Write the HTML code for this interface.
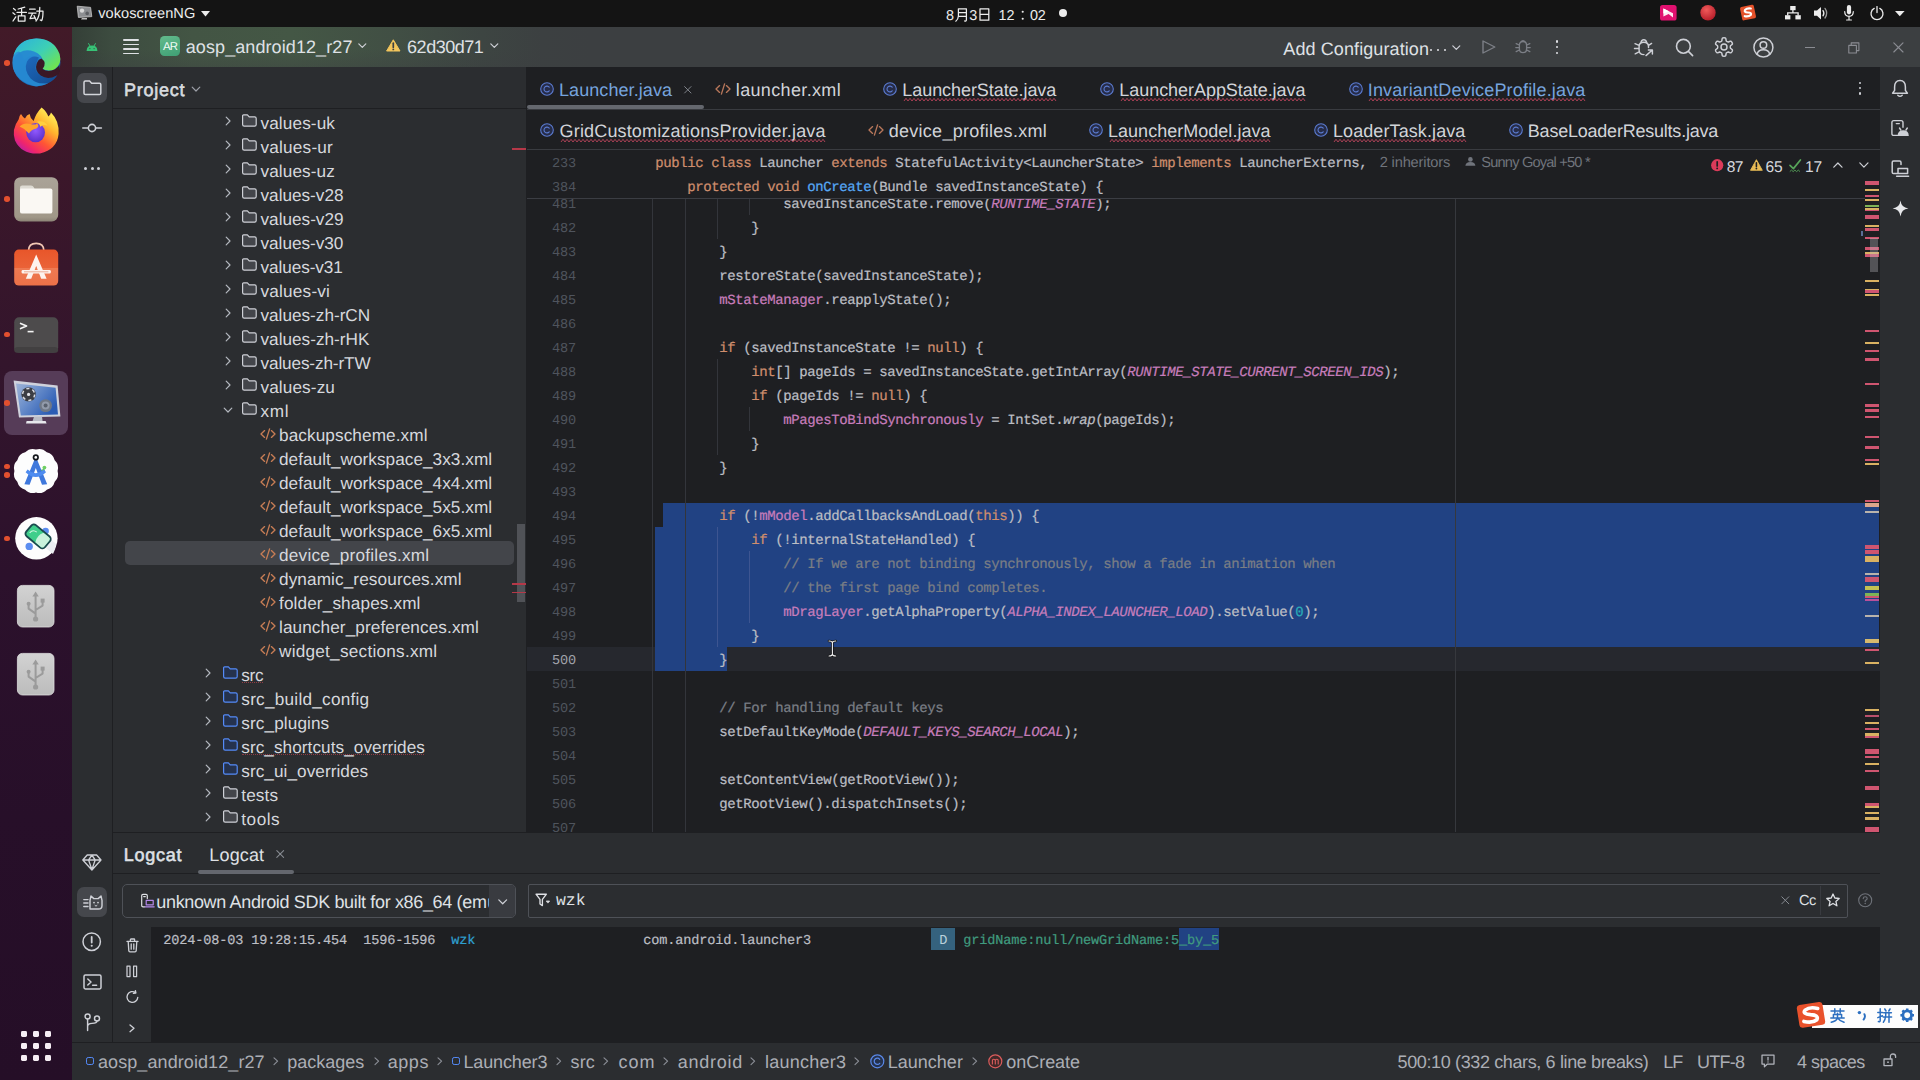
<!DOCTYPE html>
<html lang="en"><head><meta charset="utf-8"><title>Android Studio - Launcher.java</title>
<style>
html,body{margin:0;padding:0;background:#1e1f22;}
body{width:1920px;height:1080px;position:relative;overflow:hidden;font-family:'Liberation Sans',sans-serif;text-rendering:geometricPrecision;-webkit-font-smoothing:antialiased;}
body div,body span,body svg{position:absolute;display:block;box-sizing:border-box;}
span{white-space:pre;}
svg{overflow:visible;}
</style></head><body>
<div style="left:0px;top:0px;width:1920px;height:27px;background:#141414;"></div>
<div style="left:0px;top:27px;width:72px;height:1053px;background:linear-gradient(180deg,#421a28 0%,#3b172a 14%,#33152c 32%,#2c112c 52%,#270f29 75%,#250e27 100%);"></div>
<div style="left:72px;top:27px;width:1848px;height:40px;background:linear-gradient(180deg,rgba(60,63,65,0) 0%,rgba(60,63,65,0) 55%,rgba(60,63,65,.35) 100%),linear-gradient(90deg,#343f37 0px,#3d4c40 40px,#435544 120px,#445745 220px,#414f44 320px,#3d4542 410px,#3c4041 470px,#3c3f41 520px,#3c3f41 100%);"></div>
<div style="left:72px;top:67px;width:41px;height:975px;background:#2b2d30;"></div>
<div style="left:112px;top:67px;width:1px;height:975px;background:#1e1f22;"></div>
<div style="left:113px;top:67px;width:413px;height:766px;background:#2b2d30;"></div>
<div style="left:113px;top:108px;width:413px;height:1px;background:#1e1f22;"></div>
<div style="left:527px;top:67px;width:1353px;height:766px;background:#1e1f22;"></div>
<div style="left:1880px;top:67px;width:40px;height:975px;background:#2b2d30;"></div>
<div style="left:1879px;top:67px;width:1px;height:975px;background:#1e1f22;"></div>
<div style="left:113px;top:833px;width:1767px;height:209px;background:#2b2d30;"></div>
<div style="left:113px;top:832px;width:1767px;height:1px;background:#1e1f22;"></div>
<div style="left:72px;top:1042px;width:1848px;height:38px;background:#2b2d30;"></div>
<div style="left:72px;top:1042px;width:1848px;height:1px;background:#1e1f22;"></div>
<svg style="left:12px;top:6px;" width="32" height="17" viewBox="0 0 32 17"><g fill="none" stroke="#ececec" stroke-width="1.25" stroke-linecap="round" stroke-linejoin="round"><path d="M1.5 2.5 L3.6 4.2 M0.8 6.8 L3 8.4 M1 15 L3.8 10.8"/><path d="M12.8 1.2 L6.2 3 M5 6.4 H14.4 M9.6 2.4 V9.6 M6.3 9.8 H13 V15 H6.3 Z"/><path d="M17.6 3.2 H23.2 M16.6 7 H24 M20.6 7.2 L18 12.6 L23.4 11.8 M22 9.6 L23.8 13.6"/><path d="M24.8 5.2 H31 Q31 12.6 29.6 14.6 L28.2 14 M27.8 1.4 Q27.8 10.6 24 15"/></g></svg>
<svg style="left:76px;top:5px;" width="17" height="16" viewBox="0 0 17 16"><path d="M1.2 1.2 L14.6 2.4 L15.8 11.6 L2.4 12.4 Z" fill="#8d8f92" stroke="#c9c9c9" stroke-width="0.8"/><circle cx="6" cy="5.6" r="2.2" fill="#d8d8d8"/><circle cx="11.2" cy="8.4" r="1.8" fill="#5d5f63"/><path d="M6 13 H11 V14.6 H5 Z" fill="#bdbdbd"/></svg>
<span style="left:98.25px;top:5px;font:14.6px 'Liberation Sans',sans-serif;line-height:19px;color:#ececec;letter-spacing:0.046px;">vokoscreenNG</span>
<svg style="left:200.8px;top:10.8px;" width="9" height="6" viewBox="0 0 9 6"><path d="M0 0 H9 L4.5 5.6 Z" fill="#ececec"/></svg>
<span style="left:946.07px;top:7px;font:14.4px 'Liberation Sans',sans-serif;line-height:19px;color:#ececec;">8</span>
<svg style="left:954.6px;top:7.6px;" width="13" height="14" viewBox="0 0 13 14"><g fill="none" stroke="#ececec" stroke-width="1.25" stroke-linecap="round" stroke-linejoin="round"><path d="M3.4 0.8 H11.4 V12 Q11.4 13.2 9.6 13 M3.4 0.8 V8 Q3.2 11.6 0.8 13.2 M3.6 4.6 H11.2 M3.6 8.4 H11.2"/></g></svg>
<span style="left:969.15px;top:7px;font:14.4px 'Liberation Sans',sans-serif;line-height:19px;color:#ececec;">3</span>
<svg style="left:978.8px;top:8px;" width="11" height="13" viewBox="0 0 11 13"><g fill="none" stroke="#ececec" stroke-width="1.25" stroke-linejoin="round"><path d="M1 0.8 H9.8 V12.2 H1 Z M1 6.4 H9.8"/></g></svg>
<span style="left:998.60px;top:7px;font:14.4px 'Liberation Sans',sans-serif;line-height:19px;color:#ececec;letter-spacing:-0.195px;">12</span>
<svg style="left:1021px;top:9.6px;" width="4" height="11" viewBox="0 0 4 11"><circle cx="1.7" cy="1.7" r="1.05" fill="#ececec"/><circle cx="1.7" cy="8.7" r="1.05" fill="#ececec"/></svg>
<span style="left:1030.04px;top:7px;font:14.4px 'Liberation Sans',sans-serif;line-height:19px;color:#ececec;letter-spacing:-0.229px;">02</span>
<div style="left:1058.8px;top:8.9px;width:8.4px;height:8.4px;border-radius:50%;background:#ececec;"></div>
<svg style="left:1659.8px;top:4.9px;" width="17" height="16" viewBox="0 0 17 16"><rect x="0" y="0" width="16.6" height="15.5" rx="2.6" fill="#e0106f"/><path d="M3.4 3.6 L13 8.2 V12.4 L8.6 9 L3.4 11.6 Z" fill="#fde7f1"/><path d="M3.4 3.6 L9 6.2 L3.4 8.6Z" fill="#fff"/></svg>
<svg style="left:1700px;top:5px;" width="16" height="16" viewBox="0 0 16 16"><defs><radialGradient id="rg1" cx="40%" cy="32%" r="70%"><stop offset="0" stop-color="#f05a5a"/><stop offset="1" stop-color="#b81f2b"/></radialGradient></defs><circle cx="8" cy="7.7" r="7.7" fill="url(#rg1)"/></svg>
<svg style="left:1740px;top:5px;" width="17" height="16" viewBox="0 0 17 16"><g transform="rotate(-12 8 7.5)"><rect x="1" y="0.8" width="14" height="13.6" rx="1.6" fill="#e4512a"/><path d="M11.6 4.2 Q8 2.8 5.6 4.4 Q3.8 6.4 7.8 7.4 Q11.8 8.2 10.4 10.4 Q8 12 4 10.4" fill="none" stroke="#fff" stroke-width="2.1" stroke-linecap="round"/></g></svg>
<svg style="left:1784.5px;top:6px;" width="16" height="14" viewBox="0 0 16 14"><g fill="#ececec"><rect x="5.2" y="0" width="5.4" height="4.2"/><rect x="0" y="9.2" width="5.4" height="4.2"/><rect x="10.4" y="9.2" width="5.4" height="4.2"/></g><path d="M7.9 4 V6.8 M2.7 9.4 V6.8 H13.1 V9.4" fill="none" stroke="#ececec" stroke-width="1.3"/></svg>
<svg style="left:1813.8px;top:5.6px;" width="15" height="15" viewBox="0 0 15 15"><path d="M0 4.6 H3 L7 1 V13.4 L3 9.8 H0 Z" fill="#ececec"/><path d="M9 4.6 Q10.8 7.2 9 9.8" fill="none" stroke="#ececec" stroke-width="1.3" stroke-linecap="round"/><path d="M11 2.4 Q14.4 7.2 11 12" fill="none" stroke="#9a9a9a" stroke-width="1.3" stroke-linecap="round"/></svg>
<svg style="left:1843.6px;top:5.2px;" width="10" height="16" viewBox="0 0 10 16"><rect x="2.9" y="0" width="4.2" height="9.4" rx="2.1" fill="#ececec"/><path d="M0.7 6.6 Q0.7 11.4 5 11.4 Q9.3 11.4 9.3 6.6 M5 11.6 V14.8 M2.6 15 H7.4" fill="none" stroke="#ececec" stroke-width="1.2" stroke-linecap="round"/></svg>
<svg style="left:1869.6px;top:5.6px;" width="14" height="14" viewBox="0 0 14 14"><path d="M4.2 2.4 A6 6 0 1 0 9.8 2.4" fill="none" stroke="#ececec" stroke-width="1.3" stroke-linecap="round"/><path d="M7 0.6 V6.6" stroke="#ececec" stroke-width="1.3" stroke-linecap="round"/></svg>
<svg style="left:1895.4px;top:11.2px;" width="10" height="6" viewBox="0 0 10 6"><path d="M0 0 H9.6 L4.8 5.2 Z" fill="#ececec"/></svg>
<svg style="left:86px;top:42.6px;" width="12" height="9" viewBox="0 0 12 9"><path d="M0.6 8 Q0.8 2.6 6 2.6 Q11.2 2.6 11.4 8 Z" fill="#37c276"/><path d="M2.6 0.6 L4 3 M9.4 0.6 L8 3" stroke="#37c276" stroke-width="1" stroke-linecap="round"/><circle cx="3.9" cy="5.6" r="0.6" fill="#3a4a3c"/><circle cx="8.1" cy="5.6" r="0.6" fill="#3a4a3c"/></svg>
<div style="left:122.7px;top:39.3px;width:16.3px;height:1.5px;background:#dfe1e5;border-radius:1px;"></div>
<div style="left:122.7px;top:43.8px;width:16.3px;height:1.5px;background:#dfe1e5;border-radius:1px;"></div>
<div style="left:122.7px;top:48.3px;width:16.3px;height:1.5px;background:#dfe1e5;border-radius:1px;"></div>
<div style="left:122.7px;top:52.8px;width:16.3px;height:1.5px;background:#dfe1e5;border-radius:1px;"></div>
<div style="left:160px;top:35.6px;width:20px;height:20px;border-radius:4.5px;background:linear-gradient(160deg,#63bb8c,#3f9f74);"></div>
<span style="left:162.98px;top:40px;font:11.4px 'Liberation Sans',sans-serif;line-height:15px;color:#f0fbf4;letter-spacing:-0.877px;">AR</span>
<span style="left:185.74px;top:36px;font:18px 'Liberation Sans',sans-serif;line-height:23px;color:#dfe1e5;letter-spacing:0.090px;">aosp_android12_r27</span>
<svg style="left:358px;top:43px;" width="9" height="6" viewBox="0 0 9 6"><path d="M0.8 0.9 L4.3 4.4 L7.8 0.9" fill="none" stroke="#ced0d6" stroke-width="1.2" stroke-linecap="round" stroke-linejoin="round"/></svg>
<svg style="left:386.4px;top:39.4px;" width="15" height="13" viewBox="0 0 15 13"><path d="M7.3 0.8 L14 12 H0.6 Z" fill="#f2c55c" stroke="#f2c55c" stroke-width="1" stroke-linejoin="round"/><path d="M7.3 4.2 V8.2" stroke="#3c3f41" stroke-width="1.7" stroke-linecap="round"/><circle cx="7.3" cy="10.4" r="0.95" fill="#3c3f41"/></svg>
<span style="left:407.09px;top:36px;font:18px 'Liberation Sans',sans-serif;line-height:23px;color:#dfe1e5;letter-spacing:-0.472px;">62d30d71</span>
<svg style="left:489.8px;top:43px;" width="9" height="6" viewBox="0 0 9 6"><path d="M0.8 0.9 L4.3 4.4 L7.8 0.9" fill="none" stroke="#ced0d6" stroke-width="1.2" stroke-linecap="round" stroke-linejoin="round"/></svg>
<span style="left:1283.36px;top:38px;font:18px 'Liberation Sans',sans-serif;line-height:23px;color:#dfe1e5;letter-spacing:0.093px;">Add Configuration</span>
<div style="left:1430.4px;top:48.6px;width:2px;height:2px;border-radius:50%;background:#dfe1e5;"></div>
<div style="left:1437.2px;top:48.6px;width:2px;height:2px;border-radius:50%;background:#dfe1e5;"></div>
<div style="left:1444px;top:48.6px;width:2px;height:2px;border-radius:50%;background:#dfe1e5;"></div>
<svg style="left:1452.4px;top:45.4px;" width="9" height="6" viewBox="0 0 9 6"><path d="M0.8 0.9 L4.3 4.4 L7.8 0.9" fill="none" stroke="#ced0d6" stroke-width="1.2" stroke-linecap="round" stroke-linejoin="round"/></svg>
<svg style="left:1482.4px;top:40.4px;" width="14" height="14" viewBox="0 0 14 14"><path d="M1 1 L12.8 7 L1 13 Z" fill="none" stroke="#7c7f86" stroke-width="1.4" stroke-linecap="round" stroke-linejoin="round"/></svg>
<svg style="left:1515px;top:39.4px;" width="16" height="15" viewBox="0 0 16 15"><path d="M4.4 6.2 Q4.4 2.6 8 2.6 Q11.6 2.6 11.6 6.2 V10 Q11.6 13.6 8 13.6 Q4.4 13.6 4.4 10 Z M5.6 3.2 Q8 0 10.4 3.2 M4.2 6 L1.2 4.6 M4.2 8.6 H0.8 M4.2 11 L1.2 12.6 M11.8 6 L14.8 4.6 M11.8 8.6 H15.2 M11.8 11 L14.8 12.6" fill="none" stroke="#7c7f86" stroke-width="1.3" stroke-linecap="round" stroke-linejoin="round"/></svg>
<div style="left:1555.8px;top:40.0px;width:2.6px;height:2.6px;border-radius:50%;background:#dfe1e5;"></div>
<div style="left:1555.8px;top:45.900000000000006px;width:2.6px;height:2.6px;border-radius:50%;background:#dfe1e5;"></div>
<div style="left:1555.8px;top:51.7px;width:2.6px;height:2.6px;border-radius:50%;background:#dfe1e5;"></div>
<svg style="left:1634.4px;top:38.6px;" width="20" height="18" viewBox="0 0 20 18"><path d="M14.5 8.6 V7.6 Q14.5 3.3 9.8 3.3 Q5.1 3.3 5.1 7.6 V11.2 Q5.1 15.6 10 15.6 M6.9 3.6 Q7.4 0.7 9.8 0.7 Q12.2 0.7 12.7 3.6 M5 6.3 L1 4.7 M5 9.5 H0.5 M5 12.8 L1.2 14.8 M14.6 6.3 L17.6 4.4 M12 16.6 L18.3 11 M14.4 10.9 H18.4 V14.9" fill="none" stroke="#ced0d6" stroke-width="1.45" stroke-linecap="round" stroke-linejoin="round"/></svg>
<svg style="left:1675px;top:38px;" width="19" height="19" viewBox="0 0 19 19"><path d="M8.4 1.4 A6.9 6.9 0 1 0 8.4 15.2 A6.9 6.9 0 1 0 8.4 1.4 M13.4 13.4 L17.6 17.6" fill="none" stroke="#ced0d6" stroke-width="1.6" stroke-linecap="round" stroke-linejoin="round"/></svg>
<svg style="left:1713.6px;top:37.2px;" width="20" height="20" viewBox="0 0 20 20"><path d="M10.00 0.82 L10.60 0.84 L11.19 0.95 L11.73 1.32 L12.01 2.51 L12.14 3.70 L12.44 4.11 L12.80 4.33 L13.16 4.53 L13.51 4.74 L13.88 4.95 L14.38 5.00 L15.48 4.52 L16.65 4.16 L17.24 4.44 L17.63 4.90 L17.95 5.41 L18.23 5.94 L18.43 6.51 L18.38 7.15 L17.49 7.99 L16.52 8.70 L16.32 9.17 L16.31 9.59 L16.32 10.00 L16.31 10.41 L16.32 10.83 L16.52 11.30 L17.49 12.01 L18.38 12.85 L18.43 13.49 L18.23 14.06 L17.95 14.59 L17.63 15.10 L17.24 15.56 L16.65 15.84 L15.48 15.48 L14.38 15.00 L13.88 15.05 L13.51 15.26 L13.16 15.47 L12.80 15.67 L12.44 15.89 L12.14 16.30 L12.01 17.49 L11.73 18.68 L11.19 19.05 L10.60 19.16 L10.00 19.18 L9.40 19.16 L8.81 19.05 L8.27 18.68 L7.99 17.49 L7.86 16.30 L7.56 15.89 L7.20 15.67 L6.84 15.47 L6.49 15.26 L6.12 15.05 L5.62 15.00 L4.52 15.48 L3.35 15.84 L2.76 15.56 L2.37 15.10 L2.05 14.59 L1.77 14.06 L1.57 13.49 L1.62 12.85 L2.51 12.01 L3.48 11.30 L3.68 10.83 L3.69 10.41 L3.68 10.00 L3.69 9.59 L3.68 9.17 L3.48 8.70 L2.51 7.99 L1.62 7.15 L1.57 6.51 L1.77 5.94 L2.05 5.41 L2.37 4.90 L2.76 4.44 L3.35 4.16 L4.52 4.52 L5.62 5.00 L6.12 4.95 L6.49 4.74 L6.84 4.53 L7.20 4.33 L7.56 4.11 L7.86 3.70 L7.99 2.51 L8.27 1.32 L8.81 0.95 L9.40 0.84 Z" fill="none" stroke="#ced0d6" stroke-width="1.45" stroke-linecap="round" stroke-linejoin="round"/><circle cx="10" cy="10" r="3" fill="none" stroke="#ced0d6" stroke-width="1.45"/></svg>
<svg style="left:1753.4px;top:36.8px;" width="21" height="21" viewBox="0 0 21 21"><circle cx="10.4" cy="10.4" r="9.5" fill="none" stroke="#ced0d6" stroke-width="1.5"/><circle cx="10.4" cy="8" r="3.3" fill="none" stroke="#ced0d6" stroke-width="1.5"/><path d="M4.2 17 Q5 12.8 10.4 12.8 Q15.8 12.8 16.6 17" fill="none" stroke="#ced0d6" stroke-width="1.5" stroke-linecap="round" stroke-linejoin="round"/></svg>
<div style="left:1805px;top:46.7px;width:10.4px;height:1.2px;background:#8a8c92;"></div>
<svg style="left:1848.4px;top:41.6px;" width="12" height="12" viewBox="0 0 12 12"><path d="M0.8 3.4 H8.4 V11 H0.8 Z M3.2 3.2 V0.9 H10.9 V8.6 H8.6" fill="none" stroke="#8a8c92" stroke-width="1.1" stroke-linecap="round" stroke-linejoin="round"/></svg>
<svg style="left:1893px;top:42px;" width="11" height="11" viewBox="0 0 11 11"><path d="M0.8 0.8 L10 10 M10 0.8 L0.8 10" fill="none" stroke="#8a8c92" stroke-width="1.15" stroke-linecap="round" stroke-linejoin="round"/></svg>
<span style="left:124.02px;top:79px;font:18px 'Liberation Sans',sans-serif;line-height:23px;color:#d6d8dd;letter-spacing:0.763px;-webkit-text-stroke:0.55px #dfe1e5;">Project</span>
<svg style="left:190.2px;top:85.3px;" width="12" height="8" viewBox="0 0 12 8"><path d="M2.2 2.2 L6 6 L9.8 2.2" fill="none" stroke="#9da0a8" stroke-width="1.2" stroke-linecap="round" stroke-linejoin="round"/></svg>
<div style="left:125px;top:541px;width:389px;height:24px;background:#43454a;border-radius:5px;"></div>
<svg style="left:223.6px;top:115px;" width="8" height="12" viewBox="0 0 8 12"><path d="M2.2 2.2 L6 6 L2.2 9.8" fill="none" stroke="#b4b8bf" stroke-width="1.2" stroke-linecap="round" stroke-linejoin="round"/></svg>
<svg style="left:242px;top:113.9px;" width="15" height="13" viewBox="0 0 15 13"><path d="M1.6 0.8 H5.4 L7.2 2.8 H12.6 Q14.2 2.8 14.2 4.4 V10.6 Q14.2 12.2 12.6 12.2 H2.2 Q0.6 12.2 0.6 10.6 V1.8 Q0.6 0.8 1.6 0.8 Z" fill="#43454a" stroke="#ced0d6" stroke-width="1.2" stroke-linejoin="round"/></svg>
<span style="left:260.50px;top:112px;font:17.2px 'Liberation Sans',sans-serif;line-height:22px;color:#d6d8dd;letter-spacing:0.109px;">values-uk</span>
<svg style="left:223.6px;top:139px;" width="8" height="12" viewBox="0 0 8 12"><path d="M2.2 2.2 L6 6 L2.2 9.8" fill="none" stroke="#b4b8bf" stroke-width="1.2" stroke-linecap="round" stroke-linejoin="round"/></svg>
<svg style="left:242px;top:137.9px;" width="15" height="13" viewBox="0 0 15 13"><path d="M1.6 0.8 H5.4 L7.2 2.8 H12.6 Q14.2 2.8 14.2 4.4 V10.6 Q14.2 12.2 12.6 12.2 H2.2 Q0.6 12.2 0.6 10.6 V1.8 Q0.6 0.8 1.6 0.8 Z" fill="#43454a" stroke="#ced0d6" stroke-width="1.2" stroke-linejoin="round"/></svg>
<span style="left:260.50px;top:136px;font:17.2px 'Liberation Sans',sans-serif;line-height:22px;color:#d6d8dd;letter-spacing:0.205px;">values-ur</span>
<svg style="left:223.6px;top:163px;" width="8" height="12" viewBox="0 0 8 12"><path d="M2.2 2.2 L6 6 L2.2 9.8" fill="none" stroke="#b4b8bf" stroke-width="1.2" stroke-linecap="round" stroke-linejoin="round"/></svg>
<svg style="left:242px;top:161.9px;" width="15" height="13" viewBox="0 0 15 13"><path d="M1.6 0.8 H5.4 L7.2 2.8 H12.6 Q14.2 2.8 14.2 4.4 V10.6 Q14.2 12.2 12.6 12.2 H2.2 Q0.6 12.2 0.6 10.6 V1.8 Q0.6 0.8 1.6 0.8 Z" fill="#43454a" stroke="#ced0d6" stroke-width="1.2" stroke-linejoin="round"/></svg>
<span style="left:260.50px;top:160px;font:17.2px 'Liberation Sans',sans-serif;line-height:22px;color:#d6d8dd;letter-spacing:0.094px;">values-uz</span>
<svg style="left:223.6px;top:187px;" width="8" height="12" viewBox="0 0 8 12"><path d="M2.2 2.2 L6 6 L2.2 9.8" fill="none" stroke="#b4b8bf" stroke-width="1.2" stroke-linecap="round" stroke-linejoin="round"/></svg>
<svg style="left:242px;top:185.9px;" width="15" height="13" viewBox="0 0 15 13"><path d="M1.6 0.8 H5.4 L7.2 2.8 H12.6 Q14.2 2.8 14.2 4.4 V10.6 Q14.2 12.2 12.6 12.2 H2.2 Q0.6 12.2 0.6 10.6 V1.8 Q0.6 0.8 1.6 0.8 Z" fill="#43454a" stroke="#ced0d6" stroke-width="1.2" stroke-linejoin="round"/></svg>
<span style="left:260.50px;top:184px;font:17.2px 'Liberation Sans',sans-serif;line-height:22px;color:#d6d8dd;letter-spacing:-0.013px;">values-v28</span>
<svg style="left:223.6px;top:211px;" width="8" height="12" viewBox="0 0 8 12"><path d="M2.2 2.2 L6 6 L2.2 9.8" fill="none" stroke="#b4b8bf" stroke-width="1.2" stroke-linecap="round" stroke-linejoin="round"/></svg>
<svg style="left:242px;top:209.9px;" width="15" height="13" viewBox="0 0 15 13"><path d="M1.6 0.8 H5.4 L7.2 2.8 H12.6 Q14.2 2.8 14.2 4.4 V10.6 Q14.2 12.2 12.6 12.2 H2.2 Q0.6 12.2 0.6 10.6 V1.8 Q0.6 0.8 1.6 0.8 Z" fill="#43454a" stroke="#ced0d6" stroke-width="1.2" stroke-linejoin="round"/></svg>
<span style="left:260.50px;top:208px;font:17.2px 'Liberation Sans',sans-serif;line-height:22px;color:#d6d8dd;letter-spacing:-0.006px;">values-v29</span>
<svg style="left:223.6px;top:235px;" width="8" height="12" viewBox="0 0 8 12"><path d="M2.2 2.2 L6 6 L2.2 9.8" fill="none" stroke="#b4b8bf" stroke-width="1.2" stroke-linecap="round" stroke-linejoin="round"/></svg>
<svg style="left:242px;top:233.9px;" width="15" height="13" viewBox="0 0 15 13"><path d="M1.6 0.8 H5.4 L7.2 2.8 H12.6 Q14.2 2.8 14.2 4.4 V10.6 Q14.2 12.2 12.6 12.2 H2.2 Q0.6 12.2 0.6 10.6 V1.8 Q0.6 0.8 1.6 0.8 Z" fill="#43454a" stroke="#ced0d6" stroke-width="1.2" stroke-linejoin="round"/></svg>
<span style="left:260.50px;top:232px;font:17.2px 'Liberation Sans',sans-serif;line-height:22px;color:#d6d8dd;letter-spacing:-0.022px;">values-v30</span>
<svg style="left:223.6px;top:259px;" width="8" height="12" viewBox="0 0 8 12"><path d="M2.2 2.2 L6 6 L2.2 9.8" fill="none" stroke="#b4b8bf" stroke-width="1.2" stroke-linecap="round" stroke-linejoin="round"/></svg>
<svg style="left:242px;top:257.9px;" width="15" height="13" viewBox="0 0 15 13"><path d="M1.6 0.8 H5.4 L7.2 2.8 H12.6 Q14.2 2.8 14.2 4.4 V10.6 Q14.2 12.2 12.6 12.2 H2.2 Q0.6 12.2 0.6 10.6 V1.8 Q0.6 0.8 1.6 0.8 Z" fill="#43454a" stroke="#ced0d6" stroke-width="1.2" stroke-linejoin="round"/></svg>
<span style="left:260.50px;top:256px;font:17.2px 'Liberation Sans',sans-serif;line-height:22px;color:#d6d8dd;letter-spacing:-0.081px;">values-v31</span>
<svg style="left:223.6px;top:283px;" width="8" height="12" viewBox="0 0 8 12"><path d="M2.2 2.2 L6 6 L2.2 9.8" fill="none" stroke="#b4b8bf" stroke-width="1.2" stroke-linecap="round" stroke-linejoin="round"/></svg>
<svg style="left:242px;top:281.9px;" width="15" height="13" viewBox="0 0 15 13"><path d="M1.6 0.8 H5.4 L7.2 2.8 H12.6 Q14.2 2.8 14.2 4.4 V10.6 Q14.2 12.2 12.6 12.2 H2.2 Q0.6 12.2 0.6 10.6 V1.8 Q0.6 0.8 1.6 0.8 Z" fill="#43454a" stroke="#ced0d6" stroke-width="1.2" stroke-linejoin="round"/></svg>
<span style="left:260.50px;top:280px;font:17.2px 'Liberation Sans',sans-serif;line-height:22px;color:#d6d8dd;letter-spacing:0.199px;">values-vi</span>
<svg style="left:223.6px;top:307px;" width="8" height="12" viewBox="0 0 8 12"><path d="M2.2 2.2 L6 6 L2.2 9.8" fill="none" stroke="#b4b8bf" stroke-width="1.2" stroke-linecap="round" stroke-linejoin="round"/></svg>
<svg style="left:242px;top:305.9px;" width="15" height="13" viewBox="0 0 15 13"><path d="M1.6 0.8 H5.4 L7.2 2.8 H12.6 Q14.2 2.8 14.2 4.4 V10.6 Q14.2 12.2 12.6 12.2 H2.2 Q0.6 12.2 0.6 10.6 V1.8 Q0.6 0.8 1.6 0.8 Z" fill="#43454a" stroke="#ced0d6" stroke-width="1.2" stroke-linejoin="round"/></svg>
<span style="left:260.50px;top:304px;font:17.2px 'Liberation Sans',sans-serif;line-height:22px;color:#d6d8dd;letter-spacing:-0.015px;">values-zh-rCN</span>
<svg style="left:223.6px;top:331px;" width="8" height="12" viewBox="0 0 8 12"><path d="M2.2 2.2 L6 6 L2.2 9.8" fill="none" stroke="#b4b8bf" stroke-width="1.2" stroke-linecap="round" stroke-linejoin="round"/></svg>
<svg style="left:242px;top:329.9px;" width="15" height="13" viewBox="0 0 15 13"><path d="M1.6 0.8 H5.4 L7.2 2.8 H12.6 Q14.2 2.8 14.2 4.4 V10.6 Q14.2 12.2 12.6 12.2 H2.2 Q0.6 12.2 0.6 10.6 V1.8 Q0.6 0.8 1.6 0.8 Z" fill="#43454a" stroke="#ced0d6" stroke-width="1.2" stroke-linejoin="round"/></svg>
<span style="left:260.50px;top:328px;font:17.2px 'Liberation Sans',sans-serif;line-height:22px;color:#d6d8dd;">values-zh-rHK</span>
<svg style="left:223.6px;top:355px;" width="8" height="12" viewBox="0 0 8 12"><path d="M2.2 2.2 L6 6 L2.2 9.8" fill="none" stroke="#b4b8bf" stroke-width="1.2" stroke-linecap="round" stroke-linejoin="round"/></svg>
<svg style="left:242px;top:353.9px;" width="15" height="13" viewBox="0 0 15 13"><path d="M1.6 0.8 H5.4 L7.2 2.8 H12.6 Q14.2 2.8 14.2 4.4 V10.6 Q14.2 12.2 12.6 12.2 H2.2 Q0.6 12.2 0.6 10.6 V1.8 Q0.6 0.8 1.6 0.8 Z" fill="#43454a" stroke="#ced0d6" stroke-width="1.2" stroke-linejoin="round"/></svg>
<span style="left:260.50px;top:352px;font:17.2px 'Liberation Sans',sans-serif;line-height:22px;color:#d6d8dd;letter-spacing:-0.135px;">values-zh-rTW</span>
<svg style="left:223.6px;top:379px;" width="8" height="12" viewBox="0 0 8 12"><path d="M2.2 2.2 L6 6 L2.2 9.8" fill="none" stroke="#b4b8bf" stroke-width="1.2" stroke-linecap="round" stroke-linejoin="round"/></svg>
<svg style="left:242px;top:377.9px;" width="15" height="13" viewBox="0 0 15 13"><path d="M1.6 0.8 H5.4 L7.2 2.8 H12.6 Q14.2 2.8 14.2 4.4 V10.6 Q14.2 12.2 12.6 12.2 H2.2 Q0.6 12.2 0.6 10.6 V1.8 Q0.6 0.8 1.6 0.8 Z" fill="#43454a" stroke="#ced0d6" stroke-width="1.2" stroke-linejoin="round"/></svg>
<span style="left:260.50px;top:376px;font:17.2px 'Liberation Sans',sans-serif;line-height:22px;color:#d6d8dd;letter-spacing:0.105px;">values-zu</span>
<svg style="left:222px;top:405.5px;" width="12" height="8" viewBox="0 0 12 8"><path d="M2.2 2.2 L6 6 L9.8 2.2" fill="none" stroke="#b4b8bf" stroke-width="1.2" stroke-linecap="round" stroke-linejoin="round"/></svg>
<svg style="left:242px;top:401.9px;" width="15" height="13" viewBox="0 0 15 13"><path d="M1.6 0.8 H5.4 L7.2 2.8 H12.6 Q14.2 2.8 14.2 4.4 V10.6 Q14.2 12.2 12.6 12.2 H2.2 Q0.6 12.2 0.6 10.6 V1.8 Q0.6 0.8 1.6 0.8 Z" fill="#43454a" stroke="#ced0d6" stroke-width="1.2" stroke-linejoin="round"/></svg>
<span style="left:260.50px;top:400px;font:17.2px 'Liberation Sans',sans-serif;line-height:22px;color:#d6d8dd;letter-spacing:0.655px;">xml</span>
<svg style="left:260px;top:427.7px;" width="16" height="12" viewBox="0 0 16 12"><g fill="none" stroke="#c77d55" stroke-width="1.35" stroke-linecap="round" stroke-linejoin="round"><path d="M4.6 2.6 L1 6 L4.6 9.4"/><path d="M11.4 2.6 L15 6 L11.4 9.4"/><path d="M9.6 0.9 L6.4 11.1"/></g></svg>
<span style="left:279.00px;top:424px;font:17.2px 'Liberation Sans',sans-serif;line-height:22px;color:#d6d8dd;letter-spacing:0.090px;">backupscheme.xml</span>
<svg style="left:260px;top:451.7px;" width="16" height="12" viewBox="0 0 16 12"><g fill="none" stroke="#c77d55" stroke-width="1.35" stroke-linecap="round" stroke-linejoin="round"><path d="M4.6 2.6 L1 6 L4.6 9.4"/><path d="M11.4 2.6 L15 6 L11.4 9.4"/><path d="M9.6 0.9 L6.4 11.1"/></g></svg>
<span style="left:279.00px;top:448px;font:17.2px 'Liberation Sans',sans-serif;line-height:22px;color:#d6d8dd;letter-spacing:0.041px;">default_workspace_3x3.xml</span>
<svg style="left:260px;top:475.7px;" width="16" height="12" viewBox="0 0 16 12"><g fill="none" stroke="#c77d55" stroke-width="1.35" stroke-linecap="round" stroke-linejoin="round"><path d="M4.6 2.6 L1 6 L4.6 9.4"/><path d="M11.4 2.6 L15 6 L11.4 9.4"/><path d="M9.6 0.9 L6.4 11.1"/></g></svg>
<span style="left:279.00px;top:472px;font:17.2px 'Liberation Sans',sans-serif;line-height:22px;color:#d6d8dd;letter-spacing:0.041px;">default_workspace_4x4.xml</span>
<svg style="left:260px;top:499.7px;" width="16" height="12" viewBox="0 0 16 12"><g fill="none" stroke="#c77d55" stroke-width="1.35" stroke-linecap="round" stroke-linejoin="round"><path d="M4.6 2.6 L1 6 L4.6 9.4"/><path d="M11.4 2.6 L15 6 L11.4 9.4"/><path d="M9.6 0.9 L6.4 11.1"/></g></svg>
<span style="left:279.00px;top:496px;font:17.2px 'Liberation Sans',sans-serif;line-height:22px;color:#d6d8dd;letter-spacing:0.041px;">default_workspace_5x5.xml</span>
<svg style="left:260px;top:523.7px;" width="16" height="12" viewBox="0 0 16 12"><g fill="none" stroke="#c77d55" stroke-width="1.35" stroke-linecap="round" stroke-linejoin="round"><path d="M4.6 2.6 L1 6 L4.6 9.4"/><path d="M11.4 2.6 L15 6 L11.4 9.4"/><path d="M9.6 0.9 L6.4 11.1"/></g></svg>
<span style="left:279.00px;top:520px;font:17.2px 'Liberation Sans',sans-serif;line-height:22px;color:#d6d8dd;letter-spacing:0.041px;">default_workspace_6x5.xml</span>
<svg style="left:260px;top:547.7px;" width="16" height="12" viewBox="0 0 16 12"><g fill="none" stroke="#c77d55" stroke-width="1.35" stroke-linecap="round" stroke-linejoin="round"><path d="M4.6 2.6 L1 6 L4.6 9.4"/><path d="M11.4 2.6 L15 6 L11.4 9.4"/><path d="M9.6 0.9 L6.4 11.1"/></g></svg>
<span style="left:279.00px;top:544px;font:17.2px 'Liberation Sans',sans-serif;line-height:22px;color:#d6d8dd;letter-spacing:0.223px;">device_profiles.xml</span>
<svg style="left:260px;top:571.7px;" width="16" height="12" viewBox="0 0 16 12"><g fill="none" stroke="#c77d55" stroke-width="1.35" stroke-linecap="round" stroke-linejoin="round"><path d="M4.6 2.6 L1 6 L4.6 9.4"/><path d="M11.4 2.6 L15 6 L11.4 9.4"/><path d="M9.6 0.9 L6.4 11.1"/></g></svg>
<span style="left:279.00px;top:568px;font:17.2px 'Liberation Sans',sans-serif;line-height:22px;color:#d6d8dd;letter-spacing:0.102px;">dynamic_resources.xml</span>
<svg style="left:260px;top:595.7px;" width="16" height="12" viewBox="0 0 16 12"><g fill="none" stroke="#c77d55" stroke-width="1.35" stroke-linecap="round" stroke-linejoin="round"><path d="M4.6 2.6 L1 6 L4.6 9.4"/><path d="M11.4 2.6 L15 6 L11.4 9.4"/><path d="M9.6 0.9 L6.4 11.1"/></g></svg>
<span style="left:279.00px;top:592px;font:17.2px 'Liberation Sans',sans-serif;line-height:22px;color:#d6d8dd;letter-spacing:0.119px;">folder_shapes.xml</span>
<svg style="left:260px;top:619.7px;" width="16" height="12" viewBox="0 0 16 12"><g fill="none" stroke="#c77d55" stroke-width="1.35" stroke-linecap="round" stroke-linejoin="round"><path d="M4.6 2.6 L1 6 L4.6 9.4"/><path d="M11.4 2.6 L15 6 L11.4 9.4"/><path d="M9.6 0.9 L6.4 11.1"/></g></svg>
<span style="left:279.00px;top:616px;font:17.2px 'Liberation Sans',sans-serif;line-height:22px;color:#d6d8dd;letter-spacing:0.089px;">launcher_preferences.xml</span>
<svg style="left:260px;top:643.7px;" width="16" height="12" viewBox="0 0 16 12"><g fill="none" stroke="#c77d55" stroke-width="1.35" stroke-linecap="round" stroke-linejoin="round"><path d="M4.6 2.6 L1 6 L4.6 9.4"/><path d="M11.4 2.6 L15 6 L11.4 9.4"/><path d="M9.6 0.9 L6.4 11.1"/></g></svg>
<span style="left:279.00px;top:640px;font:17.2px 'Liberation Sans',sans-serif;line-height:22px;color:#d6d8dd;letter-spacing:0.240px;">widget_sections.xml</span>
<svg style="left:204.3px;top:667px;" width="8" height="12" viewBox="0 0 8 12"><path d="M2.2 2.2 L6 6 L2.2 9.8" fill="none" stroke="#b4b8bf" stroke-width="1.2" stroke-linecap="round" stroke-linejoin="round"/></svg>
<svg style="left:223px;top:666.1px;" width="15" height="13" viewBox="0 0 15 13"><path d="M1.6 0.8 H5.4 L7.2 2.8 H12.6 Q14.2 2.8 14.2 4.4 V10.6 Q14.2 12.2 12.6 12.2 H2.2 Q0.6 12.2 0.6 10.6 V1.8 Q0.6 0.8 1.6 0.8 Z" fill="#25324d" stroke="#548af7" stroke-width="1.2" stroke-linejoin="round"/></svg>
<span style="left:241.30px;top:664px;font:17.2px 'Liberation Sans',sans-serif;line-height:22px;color:#d6d8dd;letter-spacing:-0.345px;">src</span>
<svg style="left:204.3px;top:691px;" width="8" height="12" viewBox="0 0 8 12"><path d="M2.2 2.2 L6 6 L2.2 9.8" fill="none" stroke="#b4b8bf" stroke-width="1.2" stroke-linecap="round" stroke-linejoin="round"/></svg>
<svg style="left:223px;top:690.1px;" width="15" height="13" viewBox="0 0 15 13"><path d="M1.6 0.8 H5.4 L7.2 2.8 H12.6 Q14.2 2.8 14.2 4.4 V10.6 Q14.2 12.2 12.6 12.2 H2.2 Q0.6 12.2 0.6 10.6 V1.8 Q0.6 0.8 1.6 0.8 Z" fill="#25324d" stroke="#548af7" stroke-width="1.2" stroke-linejoin="round"/></svg>
<span style="left:241.30px;top:688px;font:17.2px 'Liberation Sans',sans-serif;line-height:22px;color:#d6d8dd;letter-spacing:0.245px;">src_build_config</span>
<svg style="left:204.3px;top:715px;" width="8" height="12" viewBox="0 0 8 12"><path d="M2.2 2.2 L6 6 L2.2 9.8" fill="none" stroke="#b4b8bf" stroke-width="1.2" stroke-linecap="round" stroke-linejoin="round"/></svg>
<svg style="left:223px;top:714.1px;" width="15" height="13" viewBox="0 0 15 13"><path d="M1.6 0.8 H5.4 L7.2 2.8 H12.6 Q14.2 2.8 14.2 4.4 V10.6 Q14.2 12.2 12.6 12.2 H2.2 Q0.6 12.2 0.6 10.6 V1.8 Q0.6 0.8 1.6 0.8 Z" fill="#25324d" stroke="#548af7" stroke-width="1.2" stroke-linejoin="round"/></svg>
<span style="left:241.30px;top:712px;font:17.2px 'Liberation Sans',sans-serif;line-height:22px;color:#d6d8dd;letter-spacing:0.096px;">src_plugins</span>
<svg style="left:204.3px;top:739px;" width="8" height="12" viewBox="0 0 8 12"><path d="M2.2 2.2 L6 6 L2.2 9.8" fill="none" stroke="#b4b8bf" stroke-width="1.2" stroke-linecap="round" stroke-linejoin="round"/></svg>
<svg style="left:223px;top:738.1px;" width="15" height="13" viewBox="0 0 15 13"><path d="M1.6 0.8 H5.4 L7.2 2.8 H12.6 Q14.2 2.8 14.2 4.4 V10.6 Q14.2 12.2 12.6 12.2 H2.2 Q0.6 12.2 0.6 10.6 V1.8 Q0.6 0.8 1.6 0.8 Z" fill="#25324d" stroke="#548af7" stroke-width="1.2" stroke-linejoin="round"/></svg>
<span style="left:241.30px;top:736px;font:17.2px 'Liberation Sans',sans-serif;line-height:22px;color:#d6d8dd;letter-spacing:0.052px;">src_shortcuts_overrides</span>
<svg style="left:204.3px;top:763px;" width="8" height="12" viewBox="0 0 8 12"><path d="M2.2 2.2 L6 6 L2.2 9.8" fill="none" stroke="#b4b8bf" stroke-width="1.2" stroke-linecap="round" stroke-linejoin="round"/></svg>
<svg style="left:223px;top:762.1px;" width="15" height="13" viewBox="0 0 15 13"><path d="M1.6 0.8 H5.4 L7.2 2.8 H12.6 Q14.2 2.8 14.2 4.4 V10.6 Q14.2 12.2 12.6 12.2 H2.2 Q0.6 12.2 0.6 10.6 V1.8 Q0.6 0.8 1.6 0.8 Z" fill="#25324d" stroke="#548af7" stroke-width="1.2" stroke-linejoin="round"/></svg>
<span style="left:241.30px;top:760px;font:17.2px 'Liberation Sans',sans-serif;line-height:22px;color:#d6d8dd;letter-spacing:0.053px;">src_ui_overrides</span>
<svg style="left:204.3px;top:787px;" width="8" height="12" viewBox="0 0 8 12"><path d="M2.2 2.2 L6 6 L2.2 9.8" fill="none" stroke="#b4b8bf" stroke-width="1.2" stroke-linecap="round" stroke-linejoin="round"/></svg>
<svg style="left:223px;top:786.1px;" width="15" height="13" viewBox="0 0 15 13"><path d="M1.6 0.8 H5.4 L7.2 2.8 H12.6 Q14.2 2.8 14.2 4.4 V10.6 Q14.2 12.2 12.6 12.2 H2.2 Q0.6 12.2 0.6 10.6 V1.8 Q0.6 0.8 1.6 0.8 Z" fill="#43454a" stroke="#ced0d6" stroke-width="1.2" stroke-linejoin="round"/></svg>
<span style="left:241.30px;top:784px;font:17.2px 'Liberation Sans',sans-serif;line-height:22px;color:#d6d8dd;letter-spacing:0.096px;">tests</span>
<svg style="left:204.3px;top:811px;" width="8" height="12" viewBox="0 0 8 12"><path d="M2.2 2.2 L6 6 L2.2 9.8" fill="none" stroke="#b4b8bf" stroke-width="1.2" stroke-linecap="round" stroke-linejoin="round"/></svg>
<svg style="left:223px;top:810.1px;" width="15" height="13" viewBox="0 0 15 13"><path d="M1.6 0.8 H5.4 L7.2 2.8 H12.6 Q14.2 2.8 14.2 4.4 V10.6 Q14.2 12.2 12.6 12.2 H2.2 Q0.6 12.2 0.6 10.6 V1.8 Q0.6 0.8 1.6 0.8 Z" fill="#43454a" stroke="#ced0d6" stroke-width="1.2" stroke-linejoin="round"/></svg>
<span style="left:241.30px;top:808px;font:17.2px 'Liberation Sans',sans-serif;line-height:22px;color:#d6d8dd;letter-spacing:0.517px;">tools</span>
<div style="left:242px;top:682px;width:21px;height:0;border-top:1px dotted #8f3b45;"></div>
<div style="left:242px;top:754px;width:182px;height:0;border-top:1px dotted #8f3b45;"></div>
<div style="left:517.4px;top:524px;width:7.8px;height:78px;background:#505257;"></div>
<div style="left:512px;top:148.4px;width:14px;height:1.6px;background:#b53848;"></div>
<div style="left:512px;top:583.4px;width:14px;height:1.7px;background:#b53848;"></div>
<div style="left:512px;top:591.6px;width:14px;height:1.7px;background:#b53848;"></div>
<svg style="left:540px;top:82px;" width="14" height="14" viewBox="0 0 14 14"><circle cx="7" cy="7" r="6.3" fill="#262c48" stroke="#5b7bd0" stroke-width="1.1"/><path d="M9.2 5.2 A2.9 2.9 0 1 0 9.2 8.8" fill="none" stroke="#5b7bd0" stroke-width="1.1" stroke-linecap="round"/></svg>
<span style="left:559.02px;top:79px;font:18px 'Liberation Sans',sans-serif;line-height:23px;color:#76a4de;letter-spacing:0.074px;">Launcher.java</span>
<svg style="left:715.2px;top:83.4px;" width="16" height="12" viewBox="0 0 16 12"><g fill="none" stroke="#b8775b" stroke-width="1.35" stroke-linecap="round" stroke-linejoin="round"><path d="M4.6 2.6 L1 6 L4.6 9.4"/><path d="M11.4 2.6 L15 6 L11.4 9.4"/><path d="M9.6 0.9 L6.4 11.1"/></g></svg>
<span style="left:735.79px;top:79px;font:18px 'Liberation Sans',sans-serif;line-height:23px;color:#d2d4d9;letter-spacing:0.350px;">launcher.xml</span>
<svg style="left:882.5px;top:82px;" width="14" height="14" viewBox="0 0 14 14"><circle cx="7" cy="7" r="6.3" fill="#262c48" stroke="#5b7bd0" stroke-width="1.1"/><path d="M9.2 5.2 A2.9 2.9 0 1 0 9.2 8.8" fill="none" stroke="#5b7bd0" stroke-width="1.1" stroke-linecap="round"/></svg>
<span style="left:902.32px;top:79px;font:18px 'Liberation Sans',sans-serif;line-height:23px;color:#d2d4d9;letter-spacing:-0.067px;">LauncherState.java</span>
<svg style="left:903.8px;top:98.19999999999999px;" width="152" height="4" viewBox="0 0 152 4"><path d="M0 3 l2 -2.7 l2 2.7 l2 -2.7 l2 2.7 l2 -2.7 l2 2.7 l2 -2.7 l2 2.7 l2 -2.7 l2 2.7 l2 -2.7 l2 2.7 l2 -2.7 l2 2.7 l2 -2.7 l2 2.7 l2 -2.7 l2 2.7 l2 -2.7 l2 2.7 l2 -2.7 l2 2.7 l2 -2.7 l2 2.7 l2 -2.7 l2 2.7 l2 -2.7 l2 2.7 l2 -2.7 l2 2.7 l2 -2.7 l2 2.7 l2 -2.7 l2 2.7 l2 -2.7 l2 2.7 l2 -2.7 l2 2.7 l2 -2.7 l2 2.7 l2 -2.7 l2 2.7 l2 -2.7 l2 2.7 l2 -2.7 l2 2.7 l2 -2.7 l2 2.7 l2 -2.7 l2 2.7 l2 -2.7 l2 2.7 l2 -2.7 l2 2.7 l2 -2.7 l2 2.7 l2 -2.7 l2 2.7 l2 -2.7 l2 2.7 l2 -2.7 l2 2.7 l2 -2.7 l2 2.7 l2 -2.7 l2 2.7 l2 -2.7 l2 2.7 l2 -2.7 l2 2.7 l2 -2.7 l2 2.7 l2 -2.7 l2 2.7 l2 -2.7 l2 2.7" fill="none" stroke="#c2475e" stroke-width="0.85" stroke-linejoin="round"/></svg>
<svg style="left:1100px;top:82px;" width="14" height="14" viewBox="0 0 14 14"><circle cx="7" cy="7" r="6.3" fill="#262c48" stroke="#5b7bd0" stroke-width="1.1"/><path d="M9.2 5.2 A2.9 2.9 0 1 0 9.2 8.8" fill="none" stroke="#5b7bd0" stroke-width="1.1" stroke-linecap="round"/></svg>
<span style="left:1119.32px;top:79px;font:18px 'Liberation Sans',sans-serif;line-height:23px;color:#d2d4d9;letter-spacing:-0.048px;">LauncherAppState.java</span>
<svg style="left:1120.8px;top:98.19999999999999px;" width="184" height="4" viewBox="0 0 184 4"><path d="M0 3 l2 -2.7 l2 2.7 l2 -2.7 l2 2.7 l2 -2.7 l2 2.7 l2 -2.7 l2 2.7 l2 -2.7 l2 2.7 l2 -2.7 l2 2.7 l2 -2.7 l2 2.7 l2 -2.7 l2 2.7 l2 -2.7 l2 2.7 l2 -2.7 l2 2.7 l2 -2.7 l2 2.7 l2 -2.7 l2 2.7 l2 -2.7 l2 2.7 l2 -2.7 l2 2.7 l2 -2.7 l2 2.7 l2 -2.7 l2 2.7 l2 -2.7 l2 2.7 l2 -2.7 l2 2.7 l2 -2.7 l2 2.7 l2 -2.7 l2 2.7 l2 -2.7 l2 2.7 l2 -2.7 l2 2.7 l2 -2.7 l2 2.7 l2 -2.7 l2 2.7 l2 -2.7 l2 2.7 l2 -2.7 l2 2.7 l2 -2.7 l2 2.7 l2 -2.7 l2 2.7 l2 -2.7 l2 2.7 l2 -2.7 l2 2.7 l2 -2.7 l2 2.7 l2 -2.7 l2 2.7 l2 -2.7 l2 2.7 l2 -2.7 l2 2.7 l2 -2.7 l2 2.7 l2 -2.7 l2 2.7 l2 -2.7 l2 2.7 l2 -2.7 l2 2.7 l2 -2.7 l2 2.7 l2 -2.7 l2 2.7 l2 -2.7 l2 2.7 l2 -2.7 l2 2.7 l2 -2.7 l2 2.7 l2 -2.7 l2 2.7 l2 -2.7 l2 2.7 l2 -2.7 l2 2.7" fill="none" stroke="#c2475e" stroke-width="0.85" stroke-linejoin="round"/></svg>
<svg style="left:1349px;top:82px;" width="14" height="14" viewBox="0 0 14 14"><circle cx="7" cy="7" r="6.3" fill="#262c48" stroke="#5b7bd0" stroke-width="1.1"/><path d="M9.2 5.2 A2.9 2.9 0 1 0 9.2 8.8" fill="none" stroke="#5b7bd0" stroke-width="1.1" stroke-linecap="round"/></svg>
<span style="left:1367.74px;top:79px;font:18px 'Liberation Sans',sans-serif;line-height:23px;color:#76a4de;letter-spacing:0.175px;">InvariantDeviceProfile.java</span>
<svg style="left:1369.4px;top:98.19999999999999px;" width="216" height="4" viewBox="0 0 216 4"><path d="M0 3 l2 -2.7 l2 2.7 l2 -2.7 l2 2.7 l2 -2.7 l2 2.7 l2 -2.7 l2 2.7 l2 -2.7 l2 2.7 l2 -2.7 l2 2.7 l2 -2.7 l2 2.7 l2 -2.7 l2 2.7 l2 -2.7 l2 2.7 l2 -2.7 l2 2.7 l2 -2.7 l2 2.7 l2 -2.7 l2 2.7 l2 -2.7 l2 2.7 l2 -2.7 l2 2.7 l2 -2.7 l2 2.7 l2 -2.7 l2 2.7 l2 -2.7 l2 2.7 l2 -2.7 l2 2.7 l2 -2.7 l2 2.7 l2 -2.7 l2 2.7 l2 -2.7 l2 2.7 l2 -2.7 l2 2.7 l2 -2.7 l2 2.7 l2 -2.7 l2 2.7 l2 -2.7 l2 2.7 l2 -2.7 l2 2.7 l2 -2.7 l2 2.7 l2 -2.7 l2 2.7 l2 -2.7 l2 2.7 l2 -2.7 l2 2.7 l2 -2.7 l2 2.7 l2 -2.7 l2 2.7 l2 -2.7 l2 2.7 l2 -2.7 l2 2.7 l2 -2.7 l2 2.7 l2 -2.7 l2 2.7 l2 -2.7 l2 2.7 l2 -2.7 l2 2.7 l2 -2.7 l2 2.7 l2 -2.7 l2 2.7 l2 -2.7 l2 2.7 l2 -2.7 l2 2.7 l2 -2.7 l2 2.7 l2 -2.7 l2 2.7 l2 -2.7 l2 2.7 l2 -2.7 l2 2.7 l2 -2.7 l2 2.7 l2 -2.7 l2 2.7 l2 -2.7 l2 2.7 l2 -2.7 l2 2.7 l2 -2.7 l2 2.7 l2 -2.7 l2 2.7 l2 -2.7 l2 2.7 l2 -2.7 l2 2.7" fill="none" stroke="#c2475e" stroke-width="0.85" stroke-linejoin="round"/></svg>
<svg style="left:540px;top:122.6px;" width="14" height="14" viewBox="0 0 14 14"><circle cx="7" cy="7" r="6.3" fill="#262c48" stroke="#5b7bd0" stroke-width="1.1"/><path d="M9.2 5.2 A2.9 2.9 0 1 0 9.2 8.8" fill="none" stroke="#5b7bd0" stroke-width="1.1" stroke-linecap="round"/></svg>
<span style="left:559.59px;top:120px;font:18px 'Liberation Sans',sans-serif;line-height:23px;color:#d2d4d9;letter-spacing:0.160px;">GridCustomizationsProvider.java</span>
<svg style="left:560.5px;top:138.79999999999998px;" width="264" height="4" viewBox="0 0 264 4"><path d="M0 3 l2 -2.7 l2 2.7 l2 -2.7 l2 2.7 l2 -2.7 l2 2.7 l2 -2.7 l2 2.7 l2 -2.7 l2 2.7 l2 -2.7 l2 2.7 l2 -2.7 l2 2.7 l2 -2.7 l2 2.7 l2 -2.7 l2 2.7 l2 -2.7 l2 2.7 l2 -2.7 l2 2.7 l2 -2.7 l2 2.7 l2 -2.7 l2 2.7 l2 -2.7 l2 2.7 l2 -2.7 l2 2.7 l2 -2.7 l2 2.7 l2 -2.7 l2 2.7 l2 -2.7 l2 2.7 l2 -2.7 l2 2.7 l2 -2.7 l2 2.7 l2 -2.7 l2 2.7 l2 -2.7 l2 2.7 l2 -2.7 l2 2.7 l2 -2.7 l2 2.7 l2 -2.7 l2 2.7 l2 -2.7 l2 2.7 l2 -2.7 l2 2.7 l2 -2.7 l2 2.7 l2 -2.7 l2 2.7 l2 -2.7 l2 2.7 l2 -2.7 l2 2.7 l2 -2.7 l2 2.7 l2 -2.7 l2 2.7 l2 -2.7 l2 2.7 l2 -2.7 l2 2.7 l2 -2.7 l2 2.7 l2 -2.7 l2 2.7 l2 -2.7 l2 2.7 l2 -2.7 l2 2.7 l2 -2.7 l2 2.7 l2 -2.7 l2 2.7 l2 -2.7 l2 2.7 l2 -2.7 l2 2.7 l2 -2.7 l2 2.7 l2 -2.7 l2 2.7 l2 -2.7 l2 2.7 l2 -2.7 l2 2.7 l2 -2.7 l2 2.7 l2 -2.7 l2 2.7 l2 -2.7 l2 2.7 l2 -2.7 l2 2.7 l2 -2.7 l2 2.7 l2 -2.7 l2 2.7 l2 -2.7 l2 2.7 l2 -2.7 l2 2.7 l2 -2.7 l2 2.7 l2 -2.7 l2 2.7 l2 -2.7 l2 2.7 l2 -2.7 l2 2.7 l2 -2.7 l2 2.7 l2 -2.7 l2 2.7 l2 -2.7 l2 2.7 l2 -2.7 l2 2.7 l2 -2.7 l2 2.7 l2 -2.7 l2 2.7 l2 -2.7 l2 2.7" fill="none" stroke="#c2475e" stroke-width="0.85" stroke-linejoin="round"/></svg>
<svg style="left:867.7px;top:124.0px;" width="16" height="12" viewBox="0 0 16 12"><g fill="none" stroke="#b8775b" stroke-width="1.35" stroke-linecap="round" stroke-linejoin="round"><path d="M4.6 2.6 L1 6 L4.6 9.4"/><path d="M11.4 2.6 L15 6 L11.4 9.4"/><path d="M9.6 0.9 L6.4 11.1"/></g></svg>
<span style="left:888.74px;top:120px;font:18px 'Liberation Sans',sans-serif;line-height:23px;color:#d2d4d9;letter-spacing:0.272px;">device_profiles.xml</span>
<svg style="left:1089px;top:122.6px;" width="14" height="14" viewBox="0 0 14 14"><circle cx="7" cy="7" r="6.3" fill="#262c48" stroke="#5b7bd0" stroke-width="1.1"/><path d="M9.2 5.2 A2.9 2.9 0 1 0 9.2 8.8" fill="none" stroke="#5b7bd0" stroke-width="1.1" stroke-linecap="round"/></svg>
<span style="left:1108.02px;top:120px;font:18px 'Liberation Sans',sans-serif;line-height:23px;color:#d2d4d9;letter-spacing:0.022px;">LauncherModel.java</span>
<svg style="left:1109.5px;top:138.79999999999998px;" width="160" height="4" viewBox="0 0 160 4"><path d="M0 3 l2 -2.7 l2 2.7 l2 -2.7 l2 2.7 l2 -2.7 l2 2.7 l2 -2.7 l2 2.7 l2 -2.7 l2 2.7 l2 -2.7 l2 2.7 l2 -2.7 l2 2.7 l2 -2.7 l2 2.7 l2 -2.7 l2 2.7 l2 -2.7 l2 2.7 l2 -2.7 l2 2.7 l2 -2.7 l2 2.7 l2 -2.7 l2 2.7 l2 -2.7 l2 2.7 l2 -2.7 l2 2.7 l2 -2.7 l2 2.7 l2 -2.7 l2 2.7 l2 -2.7 l2 2.7 l2 -2.7 l2 2.7 l2 -2.7 l2 2.7 l2 -2.7 l2 2.7 l2 -2.7 l2 2.7 l2 -2.7 l2 2.7 l2 -2.7 l2 2.7 l2 -2.7 l2 2.7 l2 -2.7 l2 2.7 l2 -2.7 l2 2.7 l2 -2.7 l2 2.7 l2 -2.7 l2 2.7 l2 -2.7 l2 2.7 l2 -2.7 l2 2.7 l2 -2.7 l2 2.7 l2 -2.7 l2 2.7 l2 -2.7 l2 2.7 l2 -2.7 l2 2.7 l2 -2.7 l2 2.7 l2 -2.7 l2 2.7 l2 -2.7 l2 2.7 l2 -2.7 l2 2.7 l2 -2.7 l2 2.7" fill="none" stroke="#c2475e" stroke-width="0.85" stroke-linejoin="round"/></svg>
<svg style="left:1314px;top:122.6px;" width="14" height="14" viewBox="0 0 14 14"><circle cx="7" cy="7" r="6.3" fill="#262c48" stroke="#5b7bd0" stroke-width="1.1"/><path d="M9.2 5.2 A2.9 2.9 0 1 0 9.2 8.8" fill="none" stroke="#5b7bd0" stroke-width="1.1" stroke-linecap="round"/></svg>
<span style="left:1332.92px;top:120px;font:18px 'Liberation Sans',sans-serif;line-height:23px;color:#d2d4d9;letter-spacing:0.099px;">LoaderTask.java</span>
<svg style="left:1334.4px;top:138.79999999999998px;" width="132" height="4" viewBox="0 0 132 4"><path d="M0 3 l2 -2.7 l2 2.7 l2 -2.7 l2 2.7 l2 -2.7 l2 2.7 l2 -2.7 l2 2.7 l2 -2.7 l2 2.7 l2 -2.7 l2 2.7 l2 -2.7 l2 2.7 l2 -2.7 l2 2.7 l2 -2.7 l2 2.7 l2 -2.7 l2 2.7 l2 -2.7 l2 2.7 l2 -2.7 l2 2.7 l2 -2.7 l2 2.7 l2 -2.7 l2 2.7 l2 -2.7 l2 2.7 l2 -2.7 l2 2.7 l2 -2.7 l2 2.7 l2 -2.7 l2 2.7 l2 -2.7 l2 2.7 l2 -2.7 l2 2.7 l2 -2.7 l2 2.7 l2 -2.7 l2 2.7 l2 -2.7 l2 2.7 l2 -2.7 l2 2.7 l2 -2.7 l2 2.7 l2 -2.7 l2 2.7 l2 -2.7 l2 2.7 l2 -2.7 l2 2.7 l2 -2.7 l2 2.7 l2 -2.7 l2 2.7 l2 -2.7 l2 2.7 l2 -2.7 l2 2.7 l2 -2.7 l2 2.7" fill="none" stroke="#c2475e" stroke-width="0.85" stroke-linejoin="round"/></svg>
<svg style="left:1509px;top:122.6px;" width="14" height="14" viewBox="0 0 14 14"><circle cx="7" cy="7" r="6.3" fill="#262c48" stroke="#5b7bd0" stroke-width="1.1"/><path d="M9.2 5.2 A2.9 2.9 0 1 0 9.2 8.8" fill="none" stroke="#5b7bd0" stroke-width="1.1" stroke-linecap="round"/></svg>
<span style="left:1527.82px;top:120px;font:18px 'Liberation Sans',sans-serif;line-height:23px;color:#d2d4d9;letter-spacing:-0.221px;">BaseLoaderResults.java</span>
<svg style="left:684.4px;top:85.6px;" width="8" height="8" viewBox="0 0 8 8"><path d="M0.6 0.6 L7 7 M7 0.6 L0.6 7" stroke="#7f838a" stroke-width="1" fill="none" stroke-linecap="round"/></svg>
<div style="left:527px;top:105px;width:177px;height:3.6px;border-radius:2px;background:#64676e;"></div>
<div style="left:527px;top:108.5px;width:1353px;height:1px;background:#393b40;"></div>
<div style="left:527px;top:149px;width:1353px;height:1px;background:#393b40;"></div>
<div style="left:1858.9px;top:81.5px;width:2.4px;height:2.4px;border-radius:50%;background:#ced0d6;"></div>
<div style="left:1858.9px;top:87.1px;width:2.4px;height:2.4px;border-radius:50%;background:#ced0d6;"></div>
<div style="left:1858.9px;top:92.39999999999999px;width:2.4px;height:2.4px;border-radius:50%;background:#ced0d6;"></div>
<span style="left:552.00px;top:156px;font:13.6px 'Liberation Mono',monospace;line-height:18px;color:#4f545d;letter-spacing:-0.160px;">233</span>
<span style="left:552.00px;top:180px;font:13.6px 'Liberation Mono',monospace;line-height:18px;color:#4f545d;letter-spacing:-0.160px;">384</span>
<span style="left:655.30px;top:155px;font:14px 'Liberation Mono',monospace;line-height:18px;color:#cf8e6d;letter-spacing:-0.401px;-webkit-text-stroke:0.22px;">public</span>
<span style="left:711.30px;top:155px;font:14px 'Liberation Mono',monospace;line-height:18px;color:#cf8e6d;letter-spacing:-0.401px;-webkit-text-stroke:0.22px;">class</span>
<span style="left:759.30px;top:155px;font:14px 'Liberation Mono',monospace;line-height:18px;color:#bcbec4;letter-spacing:-0.401px;-webkit-text-stroke:0.22px;">Launcher</span>
<span style="left:831.30px;top:155px;font:14px 'Liberation Mono',monospace;line-height:18px;color:#cf8e6d;letter-spacing:-0.401px;-webkit-text-stroke:0.22px;">extends</span>
<span style="left:895.30px;top:155px;font:14px 'Liberation Mono',monospace;line-height:18px;color:#bcbec4;letter-spacing:-0.401px;-webkit-text-stroke:0.22px;">StatefulActivity&lt;LauncherState&gt;</span>
<span style="left:1151.30px;top:155px;font:14px 'Liberation Mono',monospace;line-height:18px;color:#cf8e6d;letter-spacing:-0.401px;-webkit-text-stroke:0.22px;">implements</span>
<span style="left:1239.30px;top:155px;font:14px 'Liberation Mono',monospace;line-height:18px;color:#bcbec4;letter-spacing:-0.401px;-webkit-text-stroke:0.22px;">LauncherExterns,</span>
<span style="left:687.30px;top:179px;font:14px 'Liberation Mono',monospace;line-height:18px;color:#cf8e6d;letter-spacing:-0.401px;-webkit-text-stroke:0.22px;">protected</span>
<span style="left:767.30px;top:179px;font:14px 'Liberation Mono',monospace;line-height:18px;color:#cf8e6d;letter-spacing:-0.401px;-webkit-text-stroke:0.22px;">void</span>
<span style="left:807.30px;top:179px;font:14px 'Liberation Mono',monospace;line-height:18px;color:#56a8f5;letter-spacing:-0.401px;-webkit-text-stroke:0.22px;">onCreate</span>
<span style="left:871.30px;top:179px;font:14px 'Liberation Mono',monospace;line-height:18px;color:#bcbec4;letter-spacing:-0.401px;-webkit-text-stroke:0.22px;">(Bundle savedInstanceState) {</span>
<span style="left:1379.67px;top:154px;font:14.6px 'Liberation Sans',sans-serif;line-height:19px;color:#70747c;letter-spacing:-0.140px;">2 inheritors</span>
<svg style="left:1465.4px;top:157.2px;" width="11" height="9" viewBox="0 0 11 9"><circle cx="5.4" cy="2.4" r="2.3" fill="#70747c"/><path d="M0.4 8.8 Q0.6 5 5.4 5 Q10.2 5 10.4 8.8 Z" fill="#70747c"/></svg>
<span style="left:1481.24px;top:154px;font:14.6px 'Liberation Sans',sans-serif;line-height:19px;color:#70747c;letter-spacing:-0.795px;">Sunny Goyal +50 *</span>
<svg style="left:1711.4px;top:159px;" width="13" height="13" viewBox="0 0 13 13"><circle cx="6.2" cy="6.2" r="6.1" fill="#db3b5a"/><path d="M6.2 2.8 V6.9" stroke="#1e1f22" stroke-width="1.7" stroke-linecap="round"/><circle cx="6.2" cy="9.4" r="0.95" fill="#1e1f22"/></svg>
<span style="left:1726.82px;top:158px;font:15.6px 'Liberation Sans',sans-serif;line-height:20px;color:#d5d7dc;letter-spacing:-0.697px;">87</span>
<svg style="left:1750.4px;top:158.6px;" width="13" height="12" viewBox="0 0 13 12"><path d="M6.4 0.7 L12.3 11.3 H0.5 Z" fill="#e8bb55" stroke="#e8bb55" stroke-width="0.9" stroke-linejoin="round"/><path d="M6.4 3.9 V7.5" stroke="#1e1f22" stroke-width="1.6" stroke-linecap="round"/><circle cx="6.4" cy="9.5" r="0.9" fill="#1e1f22"/></svg>
<span style="left:1765.51px;top:158px;font:15.6px 'Liberation Sans',sans-serif;line-height:20px;color:#d5d7dc;letter-spacing:-0.212px;">65</span>
<svg style="left:1789px;top:158.8px;" width="13" height="14" viewBox="0 0 13 14"><path d="M1 6.4 L4.4 9.6 L11.4 1" fill="none" stroke="#57a55a" stroke-width="1.7" stroke-linecap="round" stroke-linejoin="round"/><path d="M0.8 12.6 l1.7 -1.5 l1.7 1.5 l1.7 -1.5 l1.7 1.5 l1.7 -1.5 l1.7 1.5" fill="none" stroke="#57a55a" stroke-width="0.9"/></svg>
<span style="left:1805.01px;top:158px;font:15.6px 'Liberation Sans',sans-serif;line-height:20px;color:#d5d7dc;letter-spacing:-0.187px;">17</span>
<svg style="left:1833px;top:162px;" width="10" height="6" viewBox="0 0 10 6"><path d="M0.8 5.2 L4.9 1 L9 5.2" fill="none" stroke="#ced0d6" stroke-width="1.2" stroke-linecap="round" stroke-linejoin="round"/></svg>
<svg style="left:1859.2px;top:162.2px;" width="10" height="6" viewBox="0 0 10 6"><path d="M0.8 0.9 L4.9 5.1 L9 0.9" fill="none" stroke="#ced0d6" stroke-width="1.2" stroke-linecap="round" stroke-linejoin="round"/></svg>
<div style="left:527px;top:198px;width:1338px;height:1px;background:#3b3d43;"></div>
<div style="left:527px;top:647px;width:1353px;height:24px;background:#26282e;"></div>
<div style="left:663px;top:503px;width:1216px;height:24px;background:#214283;"></div>
<div style="left:655px;top:527px;width:1224px;height:120px;background:#214283;"></div>
<div style="left:655px;top:647px;width:72px;height:24px;background:#214283;"></div>
<div style="left:527px;top:199px;width:1353px;height:633px;overflow:hidden;">
<div style="left:125px;top:0;width:1px;height:633px;background:#33353b;"></div>
<div style="left:158px;top:0;width:1px;height:633px;background:#33353b;"></div>
<div style="left:928px;top:0;width:1px;height:633px;background:#36383d;"></div>
<div style="left:190px;top:0px;width:1px;height:40px;background:#33353b;"></div>
<div style="left:222px;top:0px;width:1px;height:16px;background:#33353b;"></div>
<div style="left:190px;top:160px;width:1px;height:96px;background:#33353b;"></div>
<div style="left:222px;top:208px;width:1px;height:24px;background:#33353b;"></div>
<div style="left:190px;top:328px;width:1px;height:120px;background:#3d5591;"></div>
<div style="left:222px;top:352px;width:1px;height:72px;background:#3d5591;"></div>
</div>
<span style="left:552.00px;top:197px;font:13.6px 'Liberation Mono',monospace;line-height:18px;color:#4f545d;letter-spacing:-0.160px;clip-path:inset(2px -4px 0px -4px);">481</span>
<span style="left:552.00px;top:221px;font:13.6px 'Liberation Mono',monospace;line-height:18px;color:#4f545d;letter-spacing:-0.160px;">482</span>
<span style="left:552.00px;top:245px;font:13.6px 'Liberation Mono',monospace;line-height:18px;color:#4f545d;letter-spacing:-0.160px;">483</span>
<span style="left:552.00px;top:269px;font:13.6px 'Liberation Mono',monospace;line-height:18px;color:#4f545d;letter-spacing:-0.160px;">484</span>
<span style="left:552.00px;top:293px;font:13.6px 'Liberation Mono',monospace;line-height:18px;color:#4f545d;letter-spacing:-0.160px;">485</span>
<span style="left:552.00px;top:317px;font:13.6px 'Liberation Mono',monospace;line-height:18px;color:#4f545d;letter-spacing:-0.160px;">486</span>
<span style="left:552.00px;top:341px;font:13.6px 'Liberation Mono',monospace;line-height:18px;color:#4f545d;letter-spacing:-0.160px;">487</span>
<span style="left:552.00px;top:365px;font:13.6px 'Liberation Mono',monospace;line-height:18px;color:#4f545d;letter-spacing:-0.160px;">488</span>
<span style="left:552.00px;top:389px;font:13.6px 'Liberation Mono',monospace;line-height:18px;color:#4f545d;letter-spacing:-0.160px;">489</span>
<span style="left:552.00px;top:413px;font:13.6px 'Liberation Mono',monospace;line-height:18px;color:#4f545d;letter-spacing:-0.160px;">490</span>
<span style="left:552.00px;top:437px;font:13.6px 'Liberation Mono',monospace;line-height:18px;color:#4f545d;letter-spacing:-0.160px;">491</span>
<span style="left:552.00px;top:461px;font:13.6px 'Liberation Mono',monospace;line-height:18px;color:#4f545d;letter-spacing:-0.160px;">492</span>
<span style="left:552.00px;top:485px;font:13.6px 'Liberation Mono',monospace;line-height:18px;color:#4f545d;letter-spacing:-0.160px;">493</span>
<span style="left:552.00px;top:509px;font:13.6px 'Liberation Mono',monospace;line-height:18px;color:#4f545d;letter-spacing:-0.160px;">494</span>
<span style="left:552.00px;top:533px;font:13.6px 'Liberation Mono',monospace;line-height:18px;color:#4f545d;letter-spacing:-0.160px;">495</span>
<span style="left:552.00px;top:557px;font:13.6px 'Liberation Mono',monospace;line-height:18px;color:#4f545d;letter-spacing:-0.160px;">496</span>
<span style="left:552.00px;top:581px;font:13.6px 'Liberation Mono',monospace;line-height:18px;color:#4f545d;letter-spacing:-0.160px;">497</span>
<span style="left:552.00px;top:605px;font:13.6px 'Liberation Mono',monospace;line-height:18px;color:#4f545d;letter-spacing:-0.160px;">498</span>
<span style="left:552.00px;top:629px;font:13.6px 'Liberation Mono',monospace;line-height:18px;color:#4f545d;letter-spacing:-0.160px;">499</span>
<span style="left:552.00px;top:653px;font:13.6px 'Liberation Mono',monospace;line-height:18px;color:#a1a3ab;letter-spacing:-0.160px;">500</span>
<span style="left:552.00px;top:677px;font:13.6px 'Liberation Mono',monospace;line-height:18px;color:#4f545d;letter-spacing:-0.160px;">501</span>
<span style="left:552.00px;top:701px;font:13.6px 'Liberation Mono',monospace;line-height:18px;color:#4f545d;letter-spacing:-0.160px;">502</span>
<span style="left:552.00px;top:725px;font:13.6px 'Liberation Mono',monospace;line-height:18px;color:#4f545d;letter-spacing:-0.160px;">503</span>
<span style="left:552.00px;top:749px;font:13.6px 'Liberation Mono',monospace;line-height:18px;color:#4f545d;letter-spacing:-0.160px;">504</span>
<span style="left:552.00px;top:773px;font:13.6px 'Liberation Mono',monospace;line-height:18px;color:#4f545d;letter-spacing:-0.160px;">505</span>
<span style="left:552.00px;top:797px;font:13.6px 'Liberation Mono',monospace;line-height:18px;color:#4f545d;letter-spacing:-0.160px;">506</span>
<span style="left:552.00px;top:821px;font:13.6px 'Liberation Mono',monospace;line-height:18px;color:#4f545d;letter-spacing:-0.160px;clip-path:inset(0px -4px 7px -4px);">507</span>
<span style="left:783.30px;top:196px;font:14px 'Liberation Mono',monospace;line-height:18px;color:#bcbec4;letter-spacing:-0.401px;clip-path:inset(3px -4px 0px -4px);-webkit-text-stroke:0.22px;">savedInstanceState.remove(</span>
<span style="left:991.30px;top:196px;font:italic 14px 'Liberation Mono',monospace;line-height:18px;color:#c77dbb;letter-spacing:-0.401px;clip-path:inset(3px -4px 0px -4px);-webkit-text-stroke:0.22px;">RUNTIME_STATE</span>
<span style="left:1095.30px;top:196px;font:14px 'Liberation Mono',monospace;line-height:18px;color:#bcbec4;letter-spacing:-0.401px;clip-path:inset(3px -4px 0px -4px);-webkit-text-stroke:0.22px;">);</span>
<span style="left:751.30px;top:220px;font:14px 'Liberation Mono',monospace;line-height:18px;color:#bcbec4;letter-spacing:-0.401px;-webkit-text-stroke:0.22px;">}</span>
<span style="left:719.30px;top:244px;font:14px 'Liberation Mono',monospace;line-height:18px;color:#bcbec4;letter-spacing:-0.401px;-webkit-text-stroke:0.22px;">}</span>
<span style="left:719.30px;top:268px;font:14px 'Liberation Mono',monospace;line-height:18px;color:#bcbec4;letter-spacing:-0.401px;-webkit-text-stroke:0.22px;">restoreState(savedInstanceState);</span>
<span style="left:719.30px;top:292px;font:14px 'Liberation Mono',monospace;line-height:18px;color:#c77dbb;letter-spacing:-0.401px;-webkit-text-stroke:0.22px;">mStateManager</span>
<span style="left:823.30px;top:292px;font:14px 'Liberation Mono',monospace;line-height:18px;color:#bcbec4;letter-spacing:-0.401px;-webkit-text-stroke:0.22px;">.reapplyState();</span>
<span style="left:719.30px;top:340px;font:14px 'Liberation Mono',monospace;line-height:18px;color:#cf8e6d;letter-spacing:-0.401px;-webkit-text-stroke:0.22px;">if</span>
<span style="left:743.30px;top:340px;font:14px 'Liberation Mono',monospace;line-height:18px;color:#bcbec4;letter-spacing:-0.401px;-webkit-text-stroke:0.22px;">(savedInstanceState !=</span>
<span style="left:927.30px;top:340px;font:14px 'Liberation Mono',monospace;line-height:18px;color:#cf8e6d;letter-spacing:-0.401px;-webkit-text-stroke:0.22px;">null</span>
<span style="left:959.30px;top:340px;font:14px 'Liberation Mono',monospace;line-height:18px;color:#bcbec4;letter-spacing:-0.401px;-webkit-text-stroke:0.22px;">) {</span>
<span style="left:751.30px;top:364px;font:14px 'Liberation Mono',monospace;line-height:18px;color:#cf8e6d;letter-spacing:-0.401px;-webkit-text-stroke:0.22px;">int</span>
<span style="left:775.30px;top:364px;font:14px 'Liberation Mono',monospace;line-height:18px;color:#bcbec4;letter-spacing:-0.401px;-webkit-text-stroke:0.22px;">[] pageIds = savedInstanceState.getIntArray(</span>
<span style="left:1127.30px;top:364px;font:italic 14px 'Liberation Mono',monospace;line-height:18px;color:#c77dbb;letter-spacing:-0.401px;-webkit-text-stroke:0.22px;">RUNTIME_STATE_CURRENT_SCREEN_IDS</span>
<span style="left:1383.30px;top:364px;font:14px 'Liberation Mono',monospace;line-height:18px;color:#bcbec4;letter-spacing:-0.401px;-webkit-text-stroke:0.22px;">);</span>
<span style="left:751.30px;top:388px;font:14px 'Liberation Mono',monospace;line-height:18px;color:#cf8e6d;letter-spacing:-0.401px;-webkit-text-stroke:0.22px;">if</span>
<span style="left:775.30px;top:388px;font:14px 'Liberation Mono',monospace;line-height:18px;color:#bcbec4;letter-spacing:-0.401px;-webkit-text-stroke:0.22px;">(pageIds !=</span>
<span style="left:871.30px;top:388px;font:14px 'Liberation Mono',monospace;line-height:18px;color:#cf8e6d;letter-spacing:-0.401px;-webkit-text-stroke:0.22px;">null</span>
<span style="left:903.30px;top:388px;font:14px 'Liberation Mono',monospace;line-height:18px;color:#bcbec4;letter-spacing:-0.401px;-webkit-text-stroke:0.22px;">) {</span>
<span style="left:783.30px;top:412px;font:14px 'Liberation Mono',monospace;line-height:18px;color:#c77dbb;letter-spacing:-0.401px;-webkit-text-stroke:0.22px;">mPagesToBindSynchronously</span>
<span style="left:991.30px;top:412px;font:14px 'Liberation Mono',monospace;line-height:18px;color:#bcbec4;letter-spacing:-0.401px;-webkit-text-stroke:0.22px;">= IntSet.</span>
<span style="left:1063.30px;top:412px;font:italic 14px 'Liberation Mono',monospace;line-height:18px;color:#bcbec4;letter-spacing:-0.401px;-webkit-text-stroke:0.22px;">wrap</span>
<span style="left:1095.30px;top:412px;font:14px 'Liberation Mono',monospace;line-height:18px;color:#bcbec4;letter-spacing:-0.401px;-webkit-text-stroke:0.22px;">(pageIds);</span>
<span style="left:751.30px;top:436px;font:14px 'Liberation Mono',monospace;line-height:18px;color:#bcbec4;letter-spacing:-0.401px;-webkit-text-stroke:0.22px;">}</span>
<span style="left:719.30px;top:460px;font:14px 'Liberation Mono',monospace;line-height:18px;color:#bcbec4;letter-spacing:-0.401px;-webkit-text-stroke:0.22px;">}</span>
<span style="left:719.30px;top:508px;font:14px 'Liberation Mono',monospace;line-height:18px;color:#cf8e6d;letter-spacing:-0.401px;-webkit-text-stroke:0.22px;">if</span>
<span style="left:743.30px;top:508px;font:14px 'Liberation Mono',monospace;line-height:18px;color:#bcbec4;letter-spacing:-0.401px;-webkit-text-stroke:0.22px;">(!</span>
<span style="left:759.30px;top:508px;font:14px 'Liberation Mono',monospace;line-height:18px;color:#c77dbb;letter-spacing:-0.401px;-webkit-text-stroke:0.22px;">mModel</span>
<span style="left:807.30px;top:508px;font:14px 'Liberation Mono',monospace;line-height:18px;color:#bcbec4;letter-spacing:-0.401px;-webkit-text-stroke:0.22px;">.addCallbacksAndLoad(</span>
<span style="left:975.30px;top:508px;font:14px 'Liberation Mono',monospace;line-height:18px;color:#cf8e6d;letter-spacing:-0.401px;-webkit-text-stroke:0.22px;">this</span>
<span style="left:1007.30px;top:508px;font:14px 'Liberation Mono',monospace;line-height:18px;color:#bcbec4;letter-spacing:-0.401px;-webkit-text-stroke:0.22px;">)) {</span>
<span style="left:751.30px;top:532px;font:14px 'Liberation Mono',monospace;line-height:18px;color:#cf8e6d;letter-spacing:-0.401px;-webkit-text-stroke:0.22px;">if</span>
<span style="left:775.30px;top:532px;font:14px 'Liberation Mono',monospace;line-height:18px;color:#bcbec4;letter-spacing:-0.401px;-webkit-text-stroke:0.22px;">(!internalStateHandled) {</span>
<span style="left:783.30px;top:556px;font:14px 'Liberation Mono',monospace;line-height:18px;color:#7a7e85;letter-spacing:-0.401px;-webkit-text-stroke:0.22px;">// If we are not binding synchronously, show a fade in animation when</span>
<span style="left:783.30px;top:580px;font:14px 'Liberation Mono',monospace;line-height:18px;color:#7a7e85;letter-spacing:-0.401px;-webkit-text-stroke:0.22px;">// the first page bind completes.</span>
<span style="left:783.30px;top:604px;font:14px 'Liberation Mono',monospace;line-height:18px;color:#c77dbb;letter-spacing:-0.401px;-webkit-text-stroke:0.22px;">mDragLayer</span>
<span style="left:863.30px;top:604px;font:14px 'Liberation Mono',monospace;line-height:18px;color:#bcbec4;letter-spacing:-0.401px;-webkit-text-stroke:0.22px;">.getAlphaProperty(</span>
<span style="left:1007.30px;top:604px;font:italic 14px 'Liberation Mono',monospace;line-height:18px;color:#c77dbb;letter-spacing:-0.401px;-webkit-text-stroke:0.22px;">ALPHA_INDEX_LAUNCHER_LOAD</span>
<span style="left:1207.30px;top:604px;font:14px 'Liberation Mono',monospace;line-height:18px;color:#bcbec4;letter-spacing:-0.401px;-webkit-text-stroke:0.22px;">).setValue(</span>
<span style="left:1295.30px;top:604px;font:14px 'Liberation Mono',monospace;line-height:18px;color:#2aacb8;letter-spacing:-0.401px;-webkit-text-stroke:0.22px;">0</span>
<span style="left:1303.30px;top:604px;font:14px 'Liberation Mono',monospace;line-height:18px;color:#bcbec4;letter-spacing:-0.401px;-webkit-text-stroke:0.22px;">);</span>
<span style="left:751.30px;top:628px;font:14px 'Liberation Mono',monospace;line-height:18px;color:#bcbec4;letter-spacing:-0.401px;-webkit-text-stroke:0.22px;">}</span>
<span style="left:719.30px;top:652px;font:14px 'Liberation Mono',monospace;line-height:18px;color:#bcbec4;letter-spacing:-0.401px;-webkit-text-stroke:0.22px;">}</span>
<span style="left:719.30px;top:700px;font:14px 'Liberation Mono',monospace;line-height:18px;color:#7a7e85;letter-spacing:-0.401px;-webkit-text-stroke:0.22px;">// For handling default keys</span>
<span style="left:719.30px;top:724px;font:14px 'Liberation Mono',monospace;line-height:18px;color:#bcbec4;letter-spacing:-0.401px;-webkit-text-stroke:0.22px;">setDefaultKeyMode(</span>
<span style="left:863.30px;top:724px;font:italic 14px 'Liberation Mono',monospace;line-height:18px;color:#c77dbb;letter-spacing:-0.401px;-webkit-text-stroke:0.22px;">DEFAULT_KEYS_SEARCH_LOCAL</span>
<span style="left:1063.30px;top:724px;font:14px 'Liberation Mono',monospace;line-height:18px;color:#bcbec4;letter-spacing:-0.401px;-webkit-text-stroke:0.22px;">);</span>
<span style="left:719.30px;top:772px;font:14px 'Liberation Mono',monospace;line-height:18px;color:#bcbec4;letter-spacing:-0.401px;-webkit-text-stroke:0.22px;">setContentView(getRootView());</span>
<span style="left:719.30px;top:796px;font:14px 'Liberation Mono',monospace;line-height:18px;color:#bcbec4;letter-spacing:-0.401px;-webkit-text-stroke:0.22px;">getRootView().dispatchInsets();</span>
<div style="left:1865px;top:181px;width:14px;height:4px;background:#cf5570;"></div>
<div style="left:1865px;top:189px;width:14px;height:2px;background:#d9b162;"></div>
<div style="left:1865px;top:195px;width:14px;height:2px;background:#cf5570;"></div>
<div style="left:1865px;top:199px;width:14px;height:2px;background:#d9b162;"></div>
<div style="left:1865px;top:205px;width:14px;height:2px;background:#7eb356;"></div>
<div style="left:1865px;top:208px;width:14px;height:1.5px;background:#d9b162;"></div>
<div style="left:1865px;top:209.5px;width:14px;height:1.5px;background:#cf5570;"></div>
<div style="left:1865px;top:215.4px;width:14px;height:3.8px;background:#cf5570;"></div>
<div style="left:1865px;top:225px;width:14px;height:1.8px;background:#d9b162;"></div>
<div style="left:1865px;top:228px;width:14px;height:2.8px;background:#cf5570;"></div>
<div style="left:1865px;top:237px;width:14px;height:2px;background:#cf5570;"></div>
<div style="left:1865px;top:247px;width:14px;height:3px;background:#cf5570;"></div>
<div style="left:1865px;top:252px;width:14px;height:1.8px;background:#d9b162;"></div>
<div style="left:1865px;top:253.8px;width:14px;height:3px;background:#cf5570;"></div>
<div style="left:1865px;top:280.2px;width:14px;height:2px;background:#d9b162;"></div>
<div style="left:1865px;top:289px;width:14px;height:1.2px;background:#d9b162;"></div>
<div style="left:1865px;top:290.2px;width:14px;height:2.6px;background:#cf5570;"></div>
<div style="left:1865px;top:294px;width:14px;height:2px;background:#d9b162;"></div>
<div style="left:1865px;top:329.8px;width:14px;height:2.2px;background:#cf5570;"></div>
<div style="left:1865px;top:341.8px;width:14px;height:2.2px;background:#d9b162;"></div>
<div style="left:1865px;top:350px;width:14px;height:2px;background:#cf5570;"></div>
<div style="left:1865px;top:358px;width:14px;height:3.2px;background:#cf5570;"></div>
<div style="left:1865px;top:383px;width:14px;height:2px;background:#cf5570;"></div>
<div style="left:1865px;top:404.3px;width:14px;height:2.8px;background:#cf5570;"></div>
<div style="left:1865px;top:409px;width:14px;height:3px;background:#cf5570;"></div>
<div style="left:1865px;top:415.8px;width:14px;height:2px;background:#cf5570;"></div>
<div style="left:1865px;top:435.8px;width:14px;height:2.2px;background:#cf5570;"></div>
<div style="left:1865px;top:446px;width:14px;height:3.2px;background:#cf5570;"></div>
<div style="left:1865px;top:459px;width:14px;height:2px;background:#cf5570;"></div>
<div style="left:1865px;top:462.8px;width:14px;height:2px;background:#d9b162;"></div>
<div style="left:1865px;top:500px;width:14px;height:2.4px;background:#cf5570;"></div>
<div style="left:1865px;top:503.3px;width:14px;height:3.4px;background:#dba58c;"></div>
<div style="left:1865px;top:511px;width:14px;height:2px;background:#b9b3ac;"></div>
<div style="left:1865px;top:544.5px;width:14px;height:4.2px;background:#cf5570;"></div>
<div style="left:1865px;top:550.2px;width:14px;height:4.2px;background:#cf5570;"></div>
<div style="left:1865px;top:556px;width:14px;height:5.6px;background:#d9b162;"></div>
<div style="left:1865px;top:572.8px;width:14px;height:1.8px;background:#b9b3ac;"></div>
<div style="left:1865px;top:577px;width:14px;height:4.6px;background:#cf5570;"></div>
<div style="left:1865px;top:586px;width:14px;height:4px;background:#c3c052;"></div>
<div style="left:1865px;top:592.7px;width:14px;height:3.3px;background:#7eb356;"></div>
<div style="left:1865px;top:596px;width:14px;height:2px;background:#cf5570;"></div>
<div style="left:1865px;top:598.6px;width:14px;height:2px;background:#b9509a;"></div>
<div style="left:1865px;top:615px;width:14px;height:2px;background:#b9b3ac;"></div>
<div style="left:1865px;top:638.7px;width:14px;height:4.2px;background:#d6b96e;"></div>
<div style="left:1865px;top:649px;width:14px;height:1.8px;background:#cf5570;"></div>
<div style="left:1865px;top:662px;width:14px;height:1.8px;background:#d9b162;"></div>
<div style="left:1865px;top:708.8px;width:14px;height:2.2px;background:#d9b162;"></div>
<div style="left:1865px;top:715px;width:14px;height:2.2px;background:#b9506c;"></div>
<div style="left:1865px;top:722px;width:14px;height:2px;background:#d9b162;"></div>
<div style="left:1865px;top:728px;width:14px;height:2.1px;background:#cf5570;"></div>
<div style="left:1865px;top:733px;width:14px;height:3px;background:#d9b162;"></div>
<div style="left:1865px;top:736px;width:14px;height:2px;background:#cf5570;"></div>
<div style="left:1865px;top:749px;width:14px;height:5px;background:#cf5570;"></div>
<div style="left:1865px;top:755.8px;width:14px;height:2px;background:#cf5570;"></div>
<div style="left:1865px;top:762.8px;width:14px;height:2.2px;background:#d9b162;"></div>
<div style="left:1865px;top:769.7px;width:14px;height:2.2px;background:#cf5570;"></div>
<div style="left:1865px;top:785.7px;width:14px;height:4.2px;background:#cf5570;"></div>
<div style="left:1865px;top:803px;width:14px;height:2.6px;background:#cf5570;"></div>
<div style="left:1865px;top:805.6px;width:14px;height:2.3px;background:#d9b162;"></div>
<div style="left:1865px;top:811.8px;width:14px;height:2.1px;background:#d9b162;"></div>
<div style="left:1865px;top:816.9px;width:14px;height:2.8px;background:#d9b162;"></div>
<div style="left:1865px;top:826.8px;width:14px;height:4.8px;background:#cf5570;"></div>
<div style="left:1869.6px;top:238.3px;width:8.6px;height:33.6px;background:rgba(190,192,198,.33);"></div>
<div style="left:1860.8px;top:230.6px;width:2.2px;height:5.4px;background:#5a6e96;"></div>
<svg style="left:828px;top:640px;" width="9" height="17" viewBox="0 0 9 17"><path d="M1 1 Q4.4 1 4.4 3 V14 Q4.4 16 1 16 M7.8 1 Q4.4 1 4.4 3 M4.4 14 Q4.4 16 7.8 16" fill="none" stroke="#101114" stroke-width="2.6" stroke-linecap="round"/><path d="M1 1 Q4.4 1 4.4 3 V14 Q4.4 16 1 16 M7.8 1 Q4.4 1 4.4 3 M4.4 14 Q4.4 16 7.8 16" fill="none" stroke="#f2f2f2" stroke-width="1.1" stroke-linecap="round"/></svg>
<svg style="left:1891px;top:79px;" width="18" height="19" viewBox="0 0 18 19"><path d="M9 1.6 Q3.6 1.6 3.6 8 V11.4 L1.6 14.2 H16.4 L14.4 11.4 V8 Q14.4 1.6 9 1.6 Z M6.8 16.2 Q9 18.4 11.2 16.2" fill="none" stroke="#ced0d6" stroke-width="1.5" stroke-linecap="round" stroke-linejoin="round"/></svg>
<svg style="left:1891px;top:119px;" width="19" height="18" viewBox="0 0 19 18"><path d="M6.6 16.4 H2.9 Q0.9 16.4 0.9 14.4 V3.6 Q0.9 1.6 2.9 1.6 H10 Q12 1.6 12 3.6 V8.2 M5.3 4.6 H8.3 M8.5 9 L9.8 11 M16.3 9 L15 11" fill="none" stroke="#ced0d6" stroke-width="1.4" stroke-linecap="round" stroke-linejoin="round"/><path d="M6.6 17 Q6.6 11.2 12.2 11.2 Q17.8 11.2 17.8 17 Z" fill="#ced0d6"/></svg>
<svg style="left:1891px;top:160px;" width="18" height="17" viewBox="0 0 18 17"><path d="M6.4 13.6 H2.6 Q1.2 13.6 1.2 12.2 V2.4 Q1.2 1 2.6 1 H8.6 Q10 1 10 2.4 V4.6 M7 8.4 H16.6 V13.6 H7 Z M5.6 16.2 H17.6" fill="none" stroke="#ced0d6" stroke-width="1.5" stroke-linecap="round" stroke-linejoin="round"/></svg>
<svg style="left:1891.5px;top:199.8px;" width="17" height="17" viewBox="0 0 17 17"><path d="M8.5 0.6 Q9.3 7.7 16.4 8.5 Q9.3 9.3 8.5 16.4 Q7.7 9.3 0.6 8.5 Q7.7 7.7 8.5 0.6 Z" fill="#e6e7ea"/></svg>
<div style="left:77px;top:73px;width:30px;height:30px;border-radius:7px;background:#45474c;"></div>
<svg style="left:82.6px;top:80px;" width="19" height="16" viewBox="0 0 19 16"><path d="M1 2.4 Q1 1 2.4 1 H6.6 L8.6 3.2 H16.4 Q17.8 3.2 17.8 4.6 V13.2 Q17.8 14.6 16.4 14.6 H2.4 Q1 14.6 1 13.2 Z" fill="none" stroke="#d3d5da" stroke-width="1.5" stroke-linecap="round" stroke-linejoin="round"/></svg>
<svg style="left:82px;top:123px;" width="21" height="10" viewBox="0 0 21 10"><path d="M0.8 5 H6 M14 5 H19.4" fill="none" stroke="#ced0d6" stroke-width="1.6" stroke-linecap="round" stroke-linejoin="round"/><circle cx="10" cy="5" r="3.6" fill="none" stroke="#ced0d6" stroke-width="1.6"/></svg>
<div style="left:84.0px;top:166.5px;width:3px;height:3px;border-radius:50%;background:#ced0d6;"></div>
<div style="left:90.5px;top:166.5px;width:3px;height:3px;border-radius:50%;background:#ced0d6;"></div>
<div style="left:96.9px;top:166.5px;width:3px;height:3px;border-radius:50%;background:#ced0d6;"></div>
<svg style="left:82px;top:853.6px;" width="20" height="17" viewBox="0 0 20 17"><path d="M5.2 1 H14.6 L19 6 L9.9 16 L0.8 6 Z M0.8 6 H19 M6.6 6 L9.9 1.2 L13.2 6 L9.9 15.6 Z" fill="none" stroke="#ced0d6" stroke-width="1.35" stroke-linecap="round" stroke-linejoin="round"/></svg>
<div style="left:77px;top:887px;width:30px;height:30px;border-radius:7px;background:#45474c;"></div>
<svg style="left:82.6px;top:895px;" width="20" height="15" viewBox="0 0 20 15"><path d="M7 14 V5.4 L8 1 L10.8 3.6 H15.2 L18 1 L19 5.4 V10.4 Q19 14 15.4 14 H7 M0.8 4.6 H5 M0.8 8 H5 M0.8 11.4 H5" fill="none" stroke="#ced0d6" stroke-width="1.45" stroke-linecap="round" stroke-linejoin="round"/><circle cx="11" cy="7.6" r="0.9" fill="#ced0d6"/><circle cx="15" cy="7.6" r="0.9" fill="#ced0d6"/><path d="M12 10.4 L13 11.2 L14 10.4" fill="none" stroke="#ced0d6" stroke-width="1" stroke-linecap="round" stroke-linejoin="round"/></svg>
<svg style="left:82.2px;top:932.4px;" width="20" height="20" viewBox="0 0 20 20"><circle cx="9.7" cy="9.7" r="8.7" fill="none" stroke="#ced0d6" stroke-width="1.5"/><path d="M9.7 5 V10.6" fill="none" stroke="#ced0d6" stroke-width="1.8" stroke-linecap="round" stroke-linejoin="round"/><circle cx="9.7" cy="13.8" r="1.05" fill="#ced0d6"/></svg>
<svg style="left:82.6px;top:974px;" width="19" height="17" viewBox="0 0 19 17"><path d="M2.4 1 H16.6 Q18 1 18 2.4 V13.6 Q18 15 16.6 15 H2.4 Q1 15 1 13.6 V2.4 Q1 1 2.4 1 Z M4.8 5 L8 8 L4.8 11 M9.6 11.2 H13.6" fill="none" stroke="#ced0d6" stroke-width="1.5" stroke-linecap="round" stroke-linejoin="round"/></svg>
<svg style="left:83.6px;top:1013px;" width="17" height="19" viewBox="0 0 17 19"><circle cx="3.6" cy="3.4" r="2.5" fill="none" stroke="#ced0d6" stroke-width="1.45"/><circle cx="13" cy="5.4" r="2.5" fill="none" stroke="#ced0d6" stroke-width="1.45"/><path d="M3.6 6 V17.6 M3.6 13.6 Q3.6 10.6 8 10.4 Q13 10.2 13 8" fill="none" stroke="#ced0d6" stroke-width="1.45" stroke-linecap="round" stroke-linejoin="round"/></svg>
<span style="left:123.82px;top:844px;font:18px 'Liberation Sans',sans-serif;line-height:23px;color:#dfe1e5;letter-spacing:0.752px;-webkit-text-stroke:0.55px #dfe1e5;">Logcat</span>
<span style="left:209.32px;top:844px;font:18px 'Liberation Sans',sans-serif;line-height:23px;color:#dfe1e5;letter-spacing:0.152px;">Logcat</span>
<svg style="left:276.4px;top:850.4px;" width="9" height="8" viewBox="0 0 9 8"><path d="M0.8 0.6 L7.6 7.4 M7.6 0.6 L0.8 7.4" stroke="#868a91" stroke-width="1.1" fill="none" stroke-linecap="round"/></svg>
<div style="left:113px;top:873.4px;width:1767px;height:1px;background:#1e1f22;"></div>
<div style="left:198.4px;top:870.4px;width:96px;height:3.6px;border-radius:2px;background:#64676e;"></div>
<div style="left:122px;top:883.5px;width:394px;height:34px;border:1px solid #4e5157;border-radius:5px;background:#2b2d30;overflow:hidden;"><div style="left:366px;top:0;width:27px;height:32px;background:#393b40;"></div></div>
<svg style="left:140.6px;top:893.4px;" width="14" height="15" viewBox="0 0 14 15"><path d="M3.6 13.8 H2 Q0.7 13.8 0.7 12.5 V2.7 Q0.7 1.4 2 1.4 H5 Q6.3 1.4 6.3 2.7 V5.6 M2.7 3.6 H4.3" fill="none" stroke="#dfe1e5" stroke-width="1.2" stroke-linecap="round" stroke-linejoin="round"/><path d="M5.2 7.4 H12.2 V11.8 H5.2 Z M4.2 13.8 H13.2" fill="none" stroke="#b589ec" stroke-width="1.2" stroke-linecap="round" stroke-linejoin="round"/></svg>
<div style="left:156px;top:886px;width:333px;height:30px;overflow:hidden;">
<span style="left:0.33px;top:5px;font:18px 'Liberation Sans',sans-serif;line-height:23px;color:#dfe1e5;letter-spacing:-0.350px;">unknown Android SDK built for x86_64 (em</span>
<span style="left:331.23px;top:5px;font:18px 'Liberation Sans',sans-serif;line-height:23px;color:#dfe1e5;">ulator</span>
</div>
<svg style="left:497.6px;top:898.6px;" width="10" height="6" viewBox="0 0 10 6"><path d="M0.8 0.9 L4.7 4.8 L8.6 0.9" fill="none" stroke="#ced0d6" stroke-width="1.25" stroke-linecap="round" stroke-linejoin="round"/></svg>
<div style="left:528px;top:883.5px;width:1320px;height:34px;border:1px solid #4e5157;border-radius:2px;background:#2b2d30;"></div>
<svg style="left:534.6px;top:892.6px;" width="16" height="15" viewBox="0 0 16 15"><path d="M1 1.2 H11.4 L7.4 6.4 V12.6 L5 11 V6.4 Z" fill="none" stroke="#dfe1e5" stroke-width="1.35" stroke-linecap="round" stroke-linejoin="round"/><path d="M11.6 8 H14.6 L13.1 9.8 Z" fill="#dfe1e5" stroke="#dfe1e5" stroke-width="0.8" stroke-linecap="round" stroke-linejoin="round"/></svg>
<span style="left:556.00px;top:890px;font:16.4px 'Liberation Mono',monospace;line-height:21px;color:#dfe1e5;">wzk</span>
<svg style="left:1781.4px;top:895.8px;" width="9" height="9" viewBox="0 0 9 9"><path d="M0.8 0.8 L7.8 7.8 M7.8 0.8 L0.8 7.8" stroke="#868a91" stroke-width="1" fill="none" stroke-linecap="round"/></svg>
<span style="left:1798.96px;top:892px;font:14.6px 'Liberation Sans',sans-serif;line-height:19px;color:#dfe1e5;letter-spacing:-0.417px;">Cc</span>
<div style="left:1820px;top:886px;width:1px;height:29px;background:#393b40;"></div>
<svg style="left:1826.4px;top:893px;" width="14" height="14" viewBox="0 0 14 14"><path d="M7 1 L8.8 5 L13.2 5.5 L9.9 8.4 L10.9 12.8 L7 10.5 L3.1 12.8 L4.1 8.4 L0.8 5.5 L5.2 5 Z" fill="none" stroke="#dfe1e5" stroke-width="1.3" stroke-linecap="round" stroke-linejoin="round"/></svg>
<svg style="left:1857.6px;top:893px;" width="15" height="15" viewBox="0 0 15 15"><circle cx="7.2" cy="7.2" r="6.5" fill="none" stroke="#6f737a" stroke-width="1.1"/><path d="M5.2 5.6 Q5.4 3.8 7.2 3.8 Q9.2 3.8 9.2 5.6 Q9.2 6.8 7.2 7.6 V8.6" fill="none" stroke="#6f737a" stroke-width="1.1" stroke-linecap="round" stroke-linejoin="round"/><circle cx="7.2" cy="10.6" r="0.75" fill="#6f737a"/></svg>
<svg style="left:125.8px;top:938px;" width="13" height="15" viewBox="0 0 13 15"><path d="M1 3.4 H12 M4.4 3.2 V1.6 Q4.4 1 5 1 H8 Q8.6 1 8.6 1.6 V3.2 M2.2 3.6 L2.8 12.6 Q2.9 13.8 4 13.8 H9 Q10.1 13.8 10.2 12.6 L10.8 3.6 M5.2 6 V11.2 M7.8 6 V11.2" fill="none" stroke="#ced0d6" stroke-width="1.3" stroke-linecap="round" stroke-linejoin="round"/></svg>
<svg style="left:126.4px;top:965px;" width="12" height="13" viewBox="0 0 12 13"><path d="M1 1 H4 V11.6 H1 Z M7.6 1 H10.6 V11.6 H7.6 Z" fill="none" stroke="#ced0d6" stroke-width="1.25" stroke-linecap="round" stroke-linejoin="round"/></svg>
<svg style="left:125.6px;top:990.4px;" width="14" height="14" viewBox="0 0 14 14"><path d="M11.8 7.4 A5.4 5.4 0 1 1 9.6 2.6 M9.4 0.6 L9.9 3 L7.4 3.4" fill="none" stroke="#ced0d6" stroke-width="1.3" stroke-linecap="round" stroke-linejoin="round"/></svg>
<svg style="left:129px;top:1024px;" width="7" height="9" viewBox="0 0 7 9"><path d="M1 0.9 L5 4.3 L1 7.7" fill="none" stroke="#ced0d6" stroke-width="1.3" stroke-linecap="round" stroke-linejoin="round"/></svg>
<div style="left:151px;top:927px;width:1729px;height:115px;background:#1e1f22;"></div>
<span style="left:163.20px;top:933px;font:13.6px 'Liberation Mono',monospace;line-height:18px;color:#bcbec4;letter-spacing:-0.162px;-webkit-text-stroke:0.2px;">2024-08-03 19:28:15.454</span>
<span style="left:363.20px;top:933px;font:13.6px 'Liberation Mono',monospace;line-height:18px;color:#bcbec4;letter-spacing:-0.162px;-webkit-text-stroke:0.2px;">1596-1596</span>
<span style="left:451.20px;top:933px;font:13.6px 'Liberation Mono',monospace;line-height:18px;color:#2f9fd0;letter-spacing:-0.162px;-webkit-text-stroke:0.2px;">wzk</span>
<span style="left:643.20px;top:933px;font:13.6px 'Liberation Mono',monospace;line-height:18px;color:#bcbec4;letter-spacing:-0.162px;-webkit-text-stroke:0.2px;">com.android.launcher3</span>
<div style="left:931px;top:928px;width:24px;height:22px;background:#35627e;"></div>
<span style="left:939.20px;top:933px;font:13.6px 'Liberation Mono',monospace;line-height:18px;color:#bbd1dc;">D</span>
<div style="left:1179px;top:928px;width:40px;height:22px;background:#214283;"></div>
<span style="left:963.20px;top:933px;font:13.6px 'Liberation Mono',monospace;line-height:18px;color:#409b7f;letter-spacing:-0.162px;-webkit-text-stroke:0.2px;">gridName:null/newGridName:5_by_5</span>
<div style="left:86px;top:1057.4px;width:8px;height:8px;border:1.4px solid #548af7;border-radius:2.2px;"></div>
<span style="left:97.94px;top:1051px;font:18px 'Liberation Sans',sans-serif;line-height:23px;color:#abaeb5;letter-spacing:0.090px;">aosp_android12_r27</span>
<svg style="left:273.2px;top:1057.4px;" width="6" height="9" viewBox="0 0 6 9"><path d="M1 0.8 L4.6 4.2 L1 7.6" fill="none" stroke="#8b8e96" stroke-width="1.15" stroke-linecap="round" stroke-linejoin="round"/></svg>
<span style="left:287.34px;top:1051px;font:18px 'Liberation Sans',sans-serif;line-height:23px;color:#abaeb5;letter-spacing:-0.036px;">packages</span>
<svg style="left:373.6px;top:1057.4px;" width="6" height="9" viewBox="0 0 6 9"><path d="M1 0.8 L4.6 4.2 L1 7.6" fill="none" stroke="#8b8e96" stroke-width="1.15" stroke-linecap="round" stroke-linejoin="round"/></svg>
<span style="left:387.64px;top:1051px;font:18px 'Liberation Sans',sans-serif;line-height:23px;color:#abaeb5;letter-spacing:0.589px;">apps</span>
<svg style="left:437px;top:1057.4px;" width="6" height="9" viewBox="0 0 6 9"><path d="M1 0.8 L4.6 4.2 L1 7.6" fill="none" stroke="#8b8e96" stroke-width="1.15" stroke-linecap="round" stroke-linejoin="round"/></svg>
<div style="left:452px;top:1057.4px;width:8px;height:8px;border:1.4px solid #548af7;border-radius:2.2px;"></div>
<span style="left:463.42px;top:1051px;font:18px 'Liberation Sans',sans-serif;line-height:23px;color:#abaeb5;letter-spacing:-0.126px;">Launcher3</span>
<svg style="left:555.6px;top:1057.4px;" width="6" height="9" viewBox="0 0 6 9"><path d="M1 0.8 L4.6 4.2 L1 7.6" fill="none" stroke="#8b8e96" stroke-width="1.15" stroke-linecap="round" stroke-linejoin="round"/></svg>
<span style="left:570.50px;top:1051px;font:18px 'Liberation Sans',sans-serif;line-height:23px;color:#abaeb5;letter-spacing:0.138px;">src</span>
<svg style="left:603.4px;top:1057.4px;" width="6" height="9" viewBox="0 0 6 9"><path d="M1 0.8 L4.6 4.2 L1 7.6" fill="none" stroke="#8b8e96" stroke-width="1.15" stroke-linecap="round" stroke-linejoin="round"/></svg>
<span style="left:618.54px;top:1051px;font:18px 'Liberation Sans',sans-serif;line-height:23px;color:#abaeb5;letter-spacing:0.968px;">com</span>
<svg style="left:662.6px;top:1057.4px;" width="6" height="9" viewBox="0 0 6 9"><path d="M1 0.8 L4.6 4.2 L1 7.6" fill="none" stroke="#8b8e96" stroke-width="1.15" stroke-linecap="round" stroke-linejoin="round"/></svg>
<span style="left:677.74px;top:1051px;font:18px 'Liberation Sans',sans-serif;line-height:23px;color:#abaeb5;letter-spacing:0.730px;">android</span>
<svg style="left:750.2px;top:1057.4px;" width="6" height="9" viewBox="0 0 6 9"><path d="M1 0.8 L4.6 4.2 L1 7.6" fill="none" stroke="#8b8e96" stroke-width="1.15" stroke-linecap="round" stroke-linejoin="round"/></svg>
<span style="left:765.09px;top:1051px;font:18px 'Liberation Sans',sans-serif;line-height:23px;color:#abaeb5;letter-spacing:0.243px;">launcher3</span>
<svg style="left:853.6px;top:1057.4px;" width="6" height="9" viewBox="0 0 6 9"><path d="M1 0.8 L4.6 4.2 L1 7.6" fill="none" stroke="#8b8e96" stroke-width="1.15" stroke-linecap="round" stroke-linejoin="round"/></svg>
<svg style="left:870px;top:1053.6px;" width="15" height="15" viewBox="0 0 15 15"><circle cx="7.3" cy="7.3" r="6.5" fill="#25324d" stroke="#5a88e8" stroke-width="1.2"/><path d="M9.7 5.3 A3.1 3.1 0 1 0 9.7 9.3" fill="none" stroke="#5a88e8" stroke-width="1.25" stroke-linecap="round"/></svg>
<span style="left:887.82px;top:1051px;font:18px 'Liberation Sans',sans-serif;line-height:23px;color:#abaeb5;">Launcher</span>
<svg style="left:972px;top:1057.4px;" width="6" height="9" viewBox="0 0 6 9"><path d="M1 0.8 L4.6 4.2 L1 7.6" fill="none" stroke="#8b8e96" stroke-width="1.15" stroke-linecap="round" stroke-linejoin="round"/></svg>
<svg style="left:987.6px;top:1053.6px;" width="15" height="15" viewBox="0 0 15 15"><circle cx="7.3" cy="7.3" r="6.5" fill="#402929" stroke="#db5c5c" stroke-width="1.2"/><path d="M4.4 10 V6.4 Q4.4 5.2 5.6 5.2 Q7.3 5.2 7.3 6.6 V10 M7.3 6.6 Q7.3 5.2 8.8 5.2 Q10.2 5.2 10.2 6.6 V10" fill="none" stroke="#db5c5c" stroke-width="1.1" stroke-linecap="round"/></svg>
<span style="left:1006.24px;top:1051px;font:18px 'Liberation Sans',sans-serif;line-height:23px;color:#abaeb5;letter-spacing:-0.030px;">onCreate</span>
<span style="left:1397.58px;top:1051px;font:18px 'Liberation Sans',sans-serif;line-height:23px;color:#abaeb5;letter-spacing:-0.372px;">500:10 (332 chars, 6 line breaks)</span>
<span style="left:1663.22px;top:1051px;font:18px 'Liberation Sans',sans-serif;line-height:23px;color:#abaeb5;letter-spacing:-0.918px;">LF</span>
<span style="left:1697.01px;top:1051px;font:18px 'Liberation Sans',sans-serif;line-height:23px;color:#abaeb5;letter-spacing:-0.732px;">UTF-8</span>
<svg style="left:1761px;top:1053.6px;" width="14" height="15" viewBox="0 0 14 15"><path d="M1 1 H13 V10 H6.4 L3.4 12.8 V10 H1 Z" fill="none" stroke="#b1b4bb" stroke-width="1.25" stroke-linecap="round" stroke-linejoin="round"/><path d="M7 3.4 V6" fill="none" stroke="#b1b4bb" stroke-width="1.3" stroke-linecap="round" stroke-linejoin="round"/><circle cx="7" cy="8" r="0.7" fill="#b1b4bb"/></svg>
<span style="left:1796.99px;top:1051px;font:18px 'Liberation Sans',sans-serif;line-height:23px;color:#abaeb5;letter-spacing:-0.526px;">4 spaces</span>
<svg style="left:1883.4px;top:1053px;" width="14" height="14" viewBox="0 0 14 14"><path d="M1 6 H9 V12.6 H1 Z M7.4 5.8 V3.6 Q7.4 1 10 1 Q12.6 1 12.6 3.6 V4.4" fill="none" stroke="#b1b4bb" stroke-width="1.3" stroke-linecap="round" stroke-linejoin="round"/><circle cx="5" cy="9.2" r="0.9" fill="#b1b4bb"/></svg>
<div style="left:1812px;top:1005.4px;width:106px;height:22.4px;background:#fdfdfd;"></div>
<svg style="left:1796.4px;top:1000.6px;" width="31" height="29" viewBox="0 0 31 29"><g transform="rotate(-9 15 14)"><rect x="2" y="2.4" width="26" height="23" rx="3.2" fill="#e9512b"/><path d="M22.6 8.6 Q15 5.4 10 8.2 Q6.2 11.6 14.6 13.6 Q23 15.4 20 19.6 Q15 22.6 7 19.2" fill="none" stroke="#fff" stroke-width="3.6" stroke-linecap="round"/></g></svg>
<svg style="left:1829.6px;top:1008px;" width="15" height="15" viewBox="0 0 15 15"><g fill="none" stroke="#2c6fc0" stroke-width="1.5" stroke-linecap="round" stroke-linejoin="round"><path d="M1 3 H14 M4.8 0.8 V5 M10.2 0.8 V5 M3.4 6.6 H11.6 V10 H3.4 Z M0.8 10 H14.2 M7.5 5.2 V10 Q6.6 13 1.2 14.2 M8 10.4 Q9.6 13 14 14.2"/></g></svg>
<svg style="left:1857px;top:1009.6px;" width="10" height="12" viewBox="0 0 10 12"><circle cx="2.4" cy="2.6" r="1.7" fill="#2c6fc0"/><path d="M7.4 4.2 Q8.8 6.8 6.6 9.6" fill="none" stroke="#2c6fc0" stroke-width="1.9" stroke-linecap="round"/></svg>
<svg style="left:1876.6px;top:1008px;" width="15" height="15" viewBox="0 0 15 15"><g fill="none" stroke="#2c6fc0" stroke-width="1.5" stroke-linecap="round" stroke-linejoin="round"><path d="M0.8 4.4 H5.4 M3.2 0.8 V12.6 Q3.2 14 1.4 13.6 M0.8 9.6 L5.4 7.8 M7.8 1 L9 3 M13 1 L11.8 3 M6.6 4.8 H14.4 M6.2 9 H14.6 M8.8 4.8 Q8.8 11.6 6.4 14.2 M12 4.8 V14.2"/></g></svg>
<svg style="left:1900.4px;top:1008.4px;" width="15" height="15" viewBox="0 0 15 15"><circle cx="7.2" cy="7.2" r="4.3" fill="none" stroke="#2c6fc0" stroke-width="2.7"/><g stroke="#2c6fc0" stroke-width="2.5" stroke-linecap="butt"><path d="M7.2 0.4 V3 M7.2 11.4 V14 M0.4 7.2 H3 M11.4 7.2 H14 M2.4 2.4 L4.2 4.2 M10.2 10.2 L12 12 M12 2.4 L10.2 4.2 M4.2 10.2 L2.4 12"/></g></svg>
<svg style="left:11.6px;top:38.4px;" width="49" height="49" viewBox="0 0 49 49"><defs>
      <linearGradient id="eg1" x1="0" y1="0.2" x2="0.6" y2="1"><stop offset="0" stop-color="#2f9fe0"/><stop offset="1" stop-color="#1359a8"/></linearGradient>
      <linearGradient id="eg2" x1="0.1" y1="0" x2="1" y2="0.75"><stop offset="0" stop-color="#2cb3dc"/><stop offset="0.55" stop-color="#3ed0b4"/><stop offset="1" stop-color="#6fe352"/></linearGradient>
      <linearGradient id="eg3" x1="0" y1="0" x2="1" y2="1"><stop offset="0" stop-color="#1e69bd"/><stop offset="1" stop-color="#114a8f"/></linearGradient></defs>
      <circle cx="24.4" cy="24.4" r="24" fill="url(#eg1)"/>
      <path d="M1.6 17 Q6 1 24.4 0.4 Q42 0.6 47.6 16 Q50.4 26 42.6 31.4 Q35 34.4 29.6 30 Q33.6 24 27 19.4 Q19 15 12 22 Q8 8 1.6 17 Z" fill="url(#eg2)"/>
      <path d="M2 20 Q10 9 22 13.6 Q30 17 31 23 Q24 18 18.6 23.6 Q13 31 20 40 Q26 46.6 36.4 45 Q30 49 22 48 Q6 44 1 30 Q0.4 24 2 20 Z" fill="#2689d2" opacity=".95"/>
      <path d="M27 19.6 Q19.6 16.4 15 23.4 Q11.4 32 18.6 40.4 Q25.6 47 36.4 44.8 Q43 42 45.6 36.4 Q38 42.4 29.6 38.4 Q21.6 33.6 24 26.4 Q25 22 27 19.6 Z" fill="url(#eg3)"/>
      <path d="M29.4 20.6 Q35.4 24.6 30.6 31 Q36 34.8 43 31.2 Q46 29.4 47.4 27 L48 33 Q46.6 36.6 44.6 37.4 Q36 42.6 28.6 37.6 Q22.4 32.6 24.6 26 Q26 21.6 29.4 20.6 Z" fill="#3a1826"/></svg>
<svg style="left:13.4px;top:106.6px;" width="46" height="47" viewBox="0 0 46 47"><defs>
      <linearGradient id="fg1" x1="0.85" y1="0.1" x2="0.2" y2="0.95"><stop offset="0" stop-color="#fff35c"/><stop offset="0.3" stop-color="#ffb52e"/><stop offset="0.6" stop-color="#ff5634"/><stop offset="0.85" stop-color="#f0256c"/><stop offset="1" stop-color="#c11fa0"/></linearGradient>
      <radialGradient id="fg2" cx="0.5" cy="0.4" r="0.6"><stop offset="0" stop-color="#9059ff"/><stop offset="1" stop-color="#5b2fc9"/></radialGradient></defs>
      <path d="M28.6 0.4 Q33.6 4.4 35.4 9.6 Q37.6 7.4 38 5.6 Q46.4 14 45.6 27 Q44 42.6 27 46.4 Q9 48 2 33.4 Q-1.6 22 5.6 12.4 Q6 9 8 7 Q9.6 10 12 11.4 Q13.6 8 16.6 7 Q17 11 20.6 14 Q23 6 28.6 0.4 Z" fill="url(#fg1)"/>
      <ellipse cx="22.6" cy="25.6" rx="9.4" ry="9.6" fill="url(#fg2)"/>
      <path d="M6.6 19.6 Q11 15 17.6 17 Q22 18.4 24 16.4 Q27 18.6 23.4 21.6 Q18 22.6 16 26.6 Q12.6 22 6.6 19.6 Z" fill="#ffa32b"/>
      <path d="M24 14.6 Q31.6 13 34.6 18.6 Q29 17 27.6 20 Q26 16.4 24 14.6 Z" fill="#ffcf3e"/></svg>
<svg style="left:14px;top:176.6px;" width="45" height="45" viewBox="0 0 45 45"><defs><linearGradient id="fl1" x1="0" y1="0" x2="0" y2="1"><stop offset="0" stop-color="#aaa398"/><stop offset="0.9" stop-color="#a09888"/><stop offset="1" stop-color="#8d8577"/></linearGradient></defs>
      <rect x="0.2" y="0.2" width="44" height="44.2" rx="6.4" fill="url(#fl1)"/>
      <path d="M6 10.6 Q6 8.4 8.2 8.4 H17 Q19 8.4 19.8 10.2 L20.6 12 H6 Z" fill="#dedbd3"/>
      <path d="M6 12.6 Q6 11.6 7 11.6 H36.4 Q38.4 11.6 38.4 13.6 V34.4 Q38.4 36.6 36.2 36.6 H8.2 Q6 36.6 6 34.4 Z" fill="#faf8f3"/></svg>
<svg style="left:14px;top:241.6px;" width="45" height="45" viewBox="0 0 45 45"><defs><linearGradient id="sw1" x1="0" y1="0" x2="0" y2="1"><stop offset="0" stop-color="#e8562a"/><stop offset="0.5" stop-color="#ea6237"/><stop offset="0.52" stop-color="#ee7a52"/><stop offset="1" stop-color="#ec7148"/></linearGradient></defs>
      <path d="M14.6 8.6 Q14.6 1.4 22.2 1.4 Q29.8 1.4 29.8 8.6" fill="none" stroke="#f3c8b4" stroke-width="1.7"/>
      <rect x="0.2" y="7.6" width="44" height="36" rx="4.6" fill="url(#sw1)"/>
      <path d="M22.2 12.6 L11.8 36.8 H17.2 L22.2 24 L27.2 36.8 H32.6 Z" fill="#fdf3ee"/>
      <path d="M8.8 28 H35.6 Q36.8 28 36.8 29.2 V30.6 Q36.8 31.6 35.6 31.6 H8.8 Q7.6 31.6 7.6 30.6 V29.2 Q7.6 28 8.8 28 Z" fill="#fdf3ee"/><path d="M10 29.8 H34.4" stroke="#e9a68e" stroke-width="0.9"/></svg>
<svg style="left:14px;top:317px;" width="45" height="37" viewBox="0 0 45 37"><rect x="0.2" y="0.2" width="44" height="35.6" rx="5" fill="#4d4b4c"/><rect x="0.2" y="30" width="44" height="5.8" rx="4" fill="#424041"/>
      <path d="M6.6 6.4 L12.6 9 L6.6 11.6" fill="none" stroke="#f4f4f4" stroke-width="1.6" stroke-linejoin="round" stroke-linecap="round"/><path d="M13.6 14.6 H19.6" stroke="#f4f4f4" stroke-width="1.6"/></svg>
<div style="left:4px;top:370.6px;width:64px;height:64px;border-radius:8px;background:#563c58;"></div>
<svg style="left:12px;top:378px;" width="50" height="48" viewBox="0 0 50 48"><defs><linearGradient id="vk1" x1="0" y1="0" x2="1" y2="0.6"><stop offset="0" stop-color="#9fb4d6"/><stop offset="0.45" stop-color="#6b8fcb"/><stop offset="1" stop-color="#2b5cb4"/></linearGradient></defs>
      <path d="M1.6 2.6 L45.6 7.6 L48.4 38.4 L7 39.6 Z" fill="#cfd2dc"/>
      <path d="M4 5.4 L43.6 9.8 L46 36.4 L8.8 37.4 Z" fill="url(#vk1)"/>
      <path d="M22 38.8 L30 38.6 L30.6 43 H20.6 Z" fill="#b9bcc6"/><path d="M14.6 43 H33.6 L34.6 45.6 H14 Z" fill="#e6e7ec"/>
      <circle cx="16.6" cy="16.4" r="7.2" fill="#3c3e44"/><circle cx="16.6" cy="16.4" r="6" fill="none" stroke="#d8dae0" stroke-width="1.5" stroke-dasharray="3.2 3.1"/><circle cx="16.6" cy="16.4" r="1.6" fill="#e4e5ea"/>
      <circle cx="33.6" cy="27.6" r="6.4" fill="#6f7886"/><circle cx="33.6" cy="27.6" r="4" fill="#929bab"/><circle cx="33.6" cy="27.6" r="2" fill="#59616e"/></svg>
<svg style="left:14px;top:449.4px;" width="44" height="44" viewBox="0 0 44 44"><path d="M22 0.4 Q28.3 -1.4 32.8 3.3 Q39.1 4.9 40.7 11.2 Q45.4 15.7 43.6 22.0 Q45.4 28.3 40.7 32.8 Q39.1 39.1 32.8 40.7 Q28.3 45.4 22.0 43.6 Q15.7 45.4 11.2 40.7 Q4.9 39.1 3.3 32.8 Q-1.4 28.3 0.4 22.0 Q-1.4 15.7 3.3 11.2 Q4.9 4.9 11.2 3.3 Q15.7 -1.4 22.0 0.4 Z" fill="#fdfdfd"/>
      <path d="M26.6 21 l3.6 -1.2 l1 3 l-3.6 1.2 Z" fill="#5fbf5a"/><circle cx="30.4" cy="18.6" r="1.9" fill="#6fcf62"/>
      <path d="M21.8 7.6 L10.4 35.2 L15.6 35.8 L21.8 19 L28 35.8 L33.2 35.2 Z" fill="#3f78dc"/>
      <path d="M11.6 23.2 Q21.8 33 32 23.2 L30 20.6 Q21.8 28 13.6 20.6 Z" fill="#4f8cf0"/>
      <circle cx="21.8" cy="8.4" r="3.1" fill="#14171c"/><circle cx="21.8" cy="8.4" r="1.35" fill="#fff"/></svg>
<svg style="left:14.6px;top:517.4px;" width="43" height="43" viewBox="0 0 43 43"><circle cx="21.4" cy="21.3" r="21.2" fill="#fdfdfd"/>
      <path d="M26 27 L38 37 A21 21 0 0 0 41 27 L33 20 Z" fill="#eceef2"/>
      <circle cx="14.2" cy="29.4" r="3.7" fill="#5b8df0"/><circle cx="30.6" cy="14" r="3.3" fill="#5b8df0"/>
      <g transform="rotate(40 23.4 19.4) translate(23.4 19.4) scale(.9) translate(-23.4 -19.4)"><rect x="9.6" y="11.6" width="27" height="16" rx="3.6" fill="#3fce8b" stroke="#1b4a4e" stroke-width="2.1"/><path d="M25 12.6 H33 Q35.6 12.6 35.6 15 V24 Q35.6 26.6 33 26.6 H25 Q21 19.6 25 12.6 Z" fill="#c9f2dc"/><path d="M13.4 22.6 Q13.4 17 19 17" fill="none" stroke="#d4f6e4" stroke-width="1.2"/></g></svg>
<svg style="left:17.2px;top:585.3px;" width="38" height="43" viewBox="0 0 38 43"><defs><linearGradient id="ub0" x1="0" y1="0" x2="0" y2="1"><stop offset="0" stop-color="#d2d2d2"/><stop offset="1" stop-color="#bcbcbc"/></linearGradient></defs>
          <rect x="0.4" y="0.4" width="36.6" height="41.6" rx="5" fill="url(#ub0)" stroke="#dedede" stroke-width="0.8"/>
          <g fill="none" stroke="#9b9b9b" stroke-width="2" stroke-linecap="round" stroke-linejoin="round"><path d="M18.6 33 V10.6 M18.6 28.6 L11.6 23.6 V19.6 M18.6 25 L25.6 20.6 V17"/></g>
          <path d="M18.6 6.4 L21.8 11.6 H15.4 Z" fill="#9b9b9b"/><circle cx="18.6" cy="34" r="2.6" fill="#9b9b9b"/><circle cx="11.6" cy="18.8" r="2" fill="#9b9b9b"/><rect x="23.6" y="13.6" width="4" height="4" fill="#9b9b9b"/></svg>
<svg style="left:17.2px;top:653.2px;" width="38" height="43" viewBox="0 0 38 43"><defs><linearGradient id="ub1" x1="0" y1="0" x2="0" y2="1"><stop offset="0" stop-color="#d2d2d2"/><stop offset="1" stop-color="#bcbcbc"/></linearGradient></defs>
          <rect x="0.4" y="0.4" width="36.6" height="41.6" rx="5" fill="url(#ub1)" stroke="#dedede" stroke-width="0.8"/>
          <g fill="none" stroke="#9b9b9b" stroke-width="2" stroke-linecap="round" stroke-linejoin="round"><path d="M18.6 33 V10.6 M18.6 28.6 L11.6 23.6 V19.6 M18.6 25 L25.6 20.6 V17"/></g>
          <path d="M18.6 6.4 L21.8 11.6 H15.4 Z" fill="#9b9b9b"/><circle cx="18.6" cy="34" r="2.6" fill="#9b9b9b"/><circle cx="11.6" cy="18.8" r="2" fill="#9b9b9b"/><rect x="23.6" y="13.6" width="4" height="4" fill="#9b9b9b"/></svg>
<div style="left:20.8px;top:1030.8px;width:6px;height:6px;border-radius:1.4px;background:#f6eef4;"></div>
<div style="left:32.8px;top:1030.8px;width:6px;height:6px;border-radius:1.4px;background:#f6eef4;"></div>
<div style="left:45px;top:1030.8px;width:6px;height:6px;border-radius:1.4px;background:#f6eef4;"></div>
<div style="left:20.8px;top:1042.8px;width:6px;height:6px;border-radius:1.4px;background:#f6eef4;"></div>
<div style="left:32.8px;top:1042.8px;width:6px;height:6px;border-radius:1.4px;background:#f6eef4;"></div>
<div style="left:45px;top:1042.8px;width:6px;height:6px;border-radius:1.4px;background:#f6eef4;"></div>
<div style="left:20.8px;top:1055px;width:6px;height:6px;border-radius:1.4px;background:#f6eef4;"></div>
<div style="left:32.8px;top:1055px;width:6px;height:6px;border-radius:1.4px;background:#f6eef4;"></div>
<div style="left:45px;top:1055px;width:6px;height:6px;border-radius:1.4px;background:#f6eef4;"></div>
<div style="left:4.4px;top:60.2px;width:5.6px;height:5.6px;border-radius:50%;background:#e2502f;"></div>
<div style="left:4.4px;top:196.2px;width:5.6px;height:5.6px;border-radius:50%;background:#e2502f;"></div>
<div style="left:4.4px;top:331.8px;width:5.6px;height:5.6px;border-radius:50%;background:#e2502f;"></div>
<div style="left:4.4px;top:400.2px;width:5.6px;height:5.6px;border-radius:50%;background:#e2502f;"></div>
<div style="left:4.4px;top:463.59999999999997px;width:5.6px;height:5.6px;border-radius:50%;background:#e2502f;"></div>
<div style="left:4.4px;top:472.2px;width:5.6px;height:5.6px;border-radius:50%;background:#e2502f;"></div>
<div style="left:4.4px;top:535.8000000000001px;width:5.6px;height:5.6px;border-radius:50%;background:#e2502f;"></div>
</body></html>
